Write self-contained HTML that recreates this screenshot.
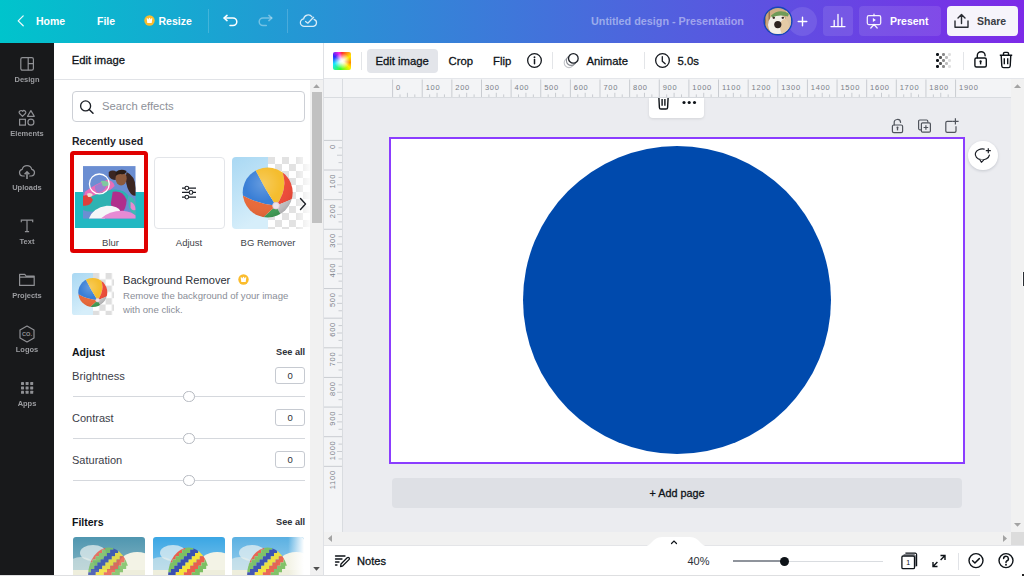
<!DOCTYPE html>
<html><head><meta charset="utf-8">
<style>
*{box-sizing:border-box;margin:0;padding:0}
html,body{width:1024px;height:576px;overflow:hidden;background:#fff;font-family:"Liberation Sans",sans-serif;color:#0d1216}
.a{position:absolute}
#top{left:0;top:0;width:1024px;height:43px;background:linear-gradient(90deg,#00c4cc 0%,#7d2ae8 100%)}
#top .t{position:absolute;color:#fff;font-weight:bold;font-size:10.5px;top:14px;line-height:14px}
#rail{left:0;top:43px;width:54px;height:533px;background:#18191b}
.ri{position:absolute;left:0;width:54px;text-align:center;color:#9c9da1;will-change:transform;font-size:7.5px;line-height:8px;font-weight:bold}
#panel{left:54px;top:43px;width:269px;height:533px;background:#fff}
#tool{left:323px;top:43px;width:701px;height:36px;background:#fff;border-bottom:1px solid #e4e6ea}
#vline{left:323px;top:43px;width:1px;height:534px;background:#dfe1e5;z-index:5}
#canvas{left:343px;top:98px;width:668px;height:434px;background:#ebecf0}
#rh{left:323px;top:79px;width:688px;height:19px;background:#f3f4f6;border-bottom:1px solid #d9dce0}
#rv{left:323px;top:98px;width:20px;height:434px;background:#f3f4f6;border-right:1px solid #d9dce0}
#corner{left:342px;top:79px;width:1px;height:19px;background:#d9dce0}
#vs{left:1011px;top:79px;width:13px;height:453px;background:#f1f1f1}
#hs{left:324px;top:532px;width:687px;height:13px;background:#f1f1f1}
#hsc{left:1011px;top:532px;width:13px;height:13px;background:#dcdcdc}
#bot{left:324px;top:545px;width:700px;height:31px;background:#fff;border-top:1px solid #e4e5e8}
#page{left:389px;top:137px;width:576px;height:327px;border:2px solid #8b3dff;background:#fff}
#circle{left:522.5px;top:146.2px;width:308px;height:308px;border-radius:50%;background:#004aad}
#addpage{left:392px;top:478.3px;width:570px;height:29.7px;background:#dee0e5;border-radius:4px;font-size:10.8px;color:#0e1318;text-align:center;line-height:30px;-webkit-text-stroke:0.3px #0e1318}
.tb{top:54.8px;font-size:11.3px;color:#0e1318;line-height:13px;-webkit-text-stroke:0.3px #0e1318}
</style></head><body>
<div id="top" class="a">
  <svg class="a" style="left:15px;top:14px" width="10" height="14" viewBox="0 0 10 14"><path d="M8.2 1.9 L3.2 6.9 L8.2 11.7" fill="none" stroke="rgba(255,255,255,.92)" stroke-width="1.3" stroke-linecap="round" stroke-linejoin="round"/></svg>
  <span class="t" style="left:36px">Home</span>
  <span class="t" style="left:97px">File</span>
  <svg class="a" style="left:143.6px;top:15.4px" width="11" height="11" viewBox="0 0 11 11"><circle cx="5.5" cy="5.5" r="5.2" fill="#fbbc2c"/><path d="M3.3 7.9 L2.7 3.6 Q2.7 2.8 3.4 3.2 L4.4 4.6 L5 3 Q5.5 2.3 6 3 L6.6 4.6 L7.6 3.2 Q8.3 2.8 8.3 3.6 L7.7 7.9 Z" fill="#fff"/></svg>
  <span class="t" style="left:158.5px">Resize</span>
  <div class="a" style="left:208px;top:9px;width:1px;height:24px;background:rgba(255,255,255,.18)"></div>
  <svg class="a" style="left:222px;top:13px" width="18" height="16" viewBox="0 0 18 16"><path d="M5 2.4 L2 5 L5 7.6" fill="none" stroke="#fff" stroke-width="1.6" stroke-linecap="round" stroke-linejoin="round"/><path d="M2.4 5 H11 A3.8 3.8 0 0 1 11 12.6 H8" fill="none" stroke="#fff" stroke-width="1.5" stroke-linecap="round"/></svg>
  <svg class="a" style="left:256px;top:13px" width="18" height="16" viewBox="0 0 18 16"><path d="M12.9 2.4 L15.9 5 L12.9 7.6" fill="none" stroke="rgba(255,255,255,.38)" stroke-width="1.6" stroke-linecap="round" stroke-linejoin="round"/><path d="M15.5 5 H7 A3.8 3.8 0 0 0 7 12.6 H10.3" fill="none" stroke="rgba(255,255,255,.38)" stroke-width="1.5" stroke-linecap="round"/></svg>
  <div class="a" style="left:287px;top:9px;width:1px;height:24px;background:rgba(255,255,255,.18)"></div>
  <svg class="a" style="left:296px;top:8px" width="26" height="24" viewBox="0 0 26 24"><path d="M16 8.8 A4.7 4.7 0 0 0 7.6 10.9 A3.7 3.7 0 0 0 8.6 18.3 H17.4 A3.6 3.6 0 0 0 18 11.3" fill="none" stroke="rgba(255,255,255,.82)" stroke-width="1.25" stroke-linecap="round"/><path d="M9.6 13.4 L11.8 15.2 L17.6 9.3" fill="none" stroke="rgba(255,255,255,.82)" stroke-width="1.25" stroke-linecap="round" stroke-linejoin="round"/></svg>
  <span class="t" style="left:591px;font-size:10.8px;color:rgba(255,255,255,.45)">Untitled design - Presentation</span>
  <div class="a" style="left:788px;top:6.5px;width:29px;height:29px;border-radius:50%;background:rgba(255,255,255,.1)"></div>
  <svg class="a" style="left:797px;top:16px" width="11" height="11" viewBox="0 0 11 11"><path d="M5.5 1.2 V9.8 M1.2 5.5 H9.8" stroke="#fff" stroke-width="1.4" stroke-linecap="round"/></svg>
  <svg class="a" style="left:763px;top:6px" width="30" height="30" viewBox="0 0 30 30"><defs><clipPath id="av"><circle cx="15" cy="15" r="13.1"/></clipPath></defs>
<circle cx="15" cy="15" r="14.6" fill="#1746b8"/>
<g clip-path="url(#av)"><rect width="30" height="30" fill="#cfae86"/>
<rect x="0" y="0" width="7" height="30" fill="#9a7450"/><rect x="3" y="0" width="2.5" height="30" fill="#c9a67e"/>
<rect x="23" y="0" width="7" height="30" fill="#dcc4a4"/>
<ellipse cx="14.5" cy="19" rx="9.5" ry="11" fill="#f2eee8"/>
<ellipse cx="21.5" cy="21" rx="4.5" ry="8" fill="#e4caa6"/>
<path d="M8 9.5 Q16 2 26 7.5 L25 10.5 Q16 8 9 11.5 Z" fill="#6f9a58"/>
<ellipse cx="10.8" cy="11.8" rx="1.3" ry="1.1" fill="#3a2c28"/><ellipse cx="19.8" cy="11.8" rx="1.3" ry="1.1" fill="#3a2c28"/>
<ellipse cx="14.8" cy="18.6" rx="3.6" ry="3.6" fill="#2c2220"/>
</g></svg>
<div class="a" style="left:823px;top:6px;width:30px;height:30px;border-radius:4px;background:rgba(255,255,255,.1)"></div>
  <svg class="a" style="left:830px;top:13px" width="16" height="15" viewBox="0 0 16 15"><path d="M1 13.6 H15 M4.2 13.6 V7.5 M8 13.6 V1.5 M11.8 13.6 V4.8" stroke="#fff" stroke-width="1.3" stroke-linecap="round"/></svg>
  <div class="a" style="left:859px;top:6px;width:82px;height:30px;border-radius:4px;background:rgba(255,255,255,.1)"></div>
  <svg class="a" style="left:865px;top:13px" width="18" height="17" viewBox="0 0 18 17"><rect x="2.3" y="2.7" width="13.4" height="8.8" rx="1.5" fill="none" stroke="rgba(255,255,255,.92)" stroke-width="1.25"/><path d="M9 1 V2.7 M9 11.5 L5.8 15 M9 11.5 L12.2 15" stroke="rgba(255,255,255,.92)" stroke-width="1.25" stroke-linecap="round"/><path d="M7.9 5.1 L10.9 7.1 L7.9 9.1 Z" fill="#fff"/></svg>
  <span class="t" style="left:890px">Present</span>
  <div class="a" style="left:947px;top:6px;width:71px;height:30px;border-radius:4px;background:#f6f4fb"></div>
  <svg class="a" style="left:953px;top:13px" width="17" height="16" viewBox="0 0 17 16"><path d="M2 8 V14.3 H15 V8" fill="none" stroke="#2a2d33" stroke-width="1.4" stroke-linecap="round" stroke-linejoin="round"/><path d="M8.5 10.5 V1.6 M5 5 L8.5 1.5 L12 5" fill="none" stroke="#2a2d33" stroke-width="1.4" stroke-linecap="round" stroke-linejoin="round"/></svg>
  <span class="t" style="left:977px;color:#3a3d44">Share</span>
</div>
<div id="rail" class="a"></div>
<svg class="a" style="left:19px;top:56px" width="16" height="16" viewBox="0 0 16 16"><rect x="1.8" y="1.7" width="12.6" height="12.5" rx="1.6" fill="none" stroke="#909195" stroke-width="1.2"/><path d="M9.2 1.7 V14.2 M9.2 7.7 H14.4" fill="none" stroke="#909195" stroke-width="1.2"/></svg>
<div class="ri" style="top:75.5px">Design</div>
<svg class="a" style="left:18px;top:109px" width="18" height="18" viewBox="0 0 18 18"><path d="M4.5 7.4 L1.6 4.5 A1.7 1.7 0 0 1 4.5 2.3 A1.7 1.7 0 0 1 7.4 4.5 Z" fill="none" stroke="#909195" stroke-width="1.2" stroke-linejoin="round"/><path d="M12.9 1.6 L16.3 7.3 H9.5 Z" fill="none" stroke="#909195" stroke-width="1.2" stroke-linejoin="round"/><rect x="1.6" y="10.3" width="5.8" height="5.8" fill="none" stroke="#909195" stroke-width="1.2"/><circle cx="12.9" cy="13.2" r="3" fill="none" stroke="#909195" stroke-width="1.2"/></svg>
<div class="ri" style="top:129.5px">Elements</div>
<svg class="a" style="left:18px;top:164px" width="18" height="16" viewBox="0 0 18 16"><path d="M6.3 12 H4.5 A3.4 3.4 0 0 1 4.2 5.3 A5 5 0 0 1 13.8 5.3 A3.4 3.4 0 0 1 13.5 12 H11.7" fill="none" stroke="#909195" stroke-width="1.2" stroke-linecap="round"/><path d="M9 15 V8.2" stroke="#909195" stroke-width="1.6"/><path d="M6.6 10.3 L9 7.8 L11.4 10.3" stroke="#909195" stroke-width="1.6" fill="none"/></svg>
<div class="ri" style="top:183.5px">Uploads</div>
<svg class="a" style="left:20px;top:219px" width="14" height="14" viewBox="0 0 14 14"><path d="M1.3 3.2 V1.1 H12.7 V3.2 M7 1.1 V12.6 M4.9 12.6 H9.1" fill="none" stroke="#909195" stroke-width="1.2"/></svg>
<div class="ri" style="top:237.5px">Text</div>
<svg class="a" style="left:18px;top:273px" width="18" height="14" viewBox="0 0 18 14"><path d="M1.6 12.4 V1.4 H6.8 L8 3 H16.2 V12.4 Z M1.6 4.1 H16.2" fill="none" stroke="#909195" stroke-width="1.2" stroke-linejoin="round"/></svg>
<div class="ri" style="top:291.5px">Projects</div>
<svg class="a" style="left:18px;top:325px" width="18" height="18" viewBox="0 0 18 18"><path d="M9 1 L16 5 V13 L9 17 L2 13 V5 Z" fill="none" stroke="#909195" stroke-width="1.2" stroke-linejoin="round"/><text x="9" y="11.4" font-size="5.6" font-weight="bold" text-anchor="middle" fill="#909195" font-family="Liberation Sans">CO.</text></svg>
<div class="ri" style="top:345.5px">Logos</div>
<svg class="a" style="left:20px;top:381px" width="14" height="14" viewBox="0 0 14 14" fill="#909195"><rect x="1.0" y="1.0" width="3" height="3" rx="0.4"/><rect x="1.0" y="5.4" width="3" height="3" rx="0.4"/><rect x="1.0" y="9.8" width="3" height="3" rx="0.4"/><rect x="5.6" y="1.0" width="3" height="3" rx="0.4"/><rect x="5.6" y="5.4" width="3" height="3" rx="0.4"/><rect x="5.6" y="9.8" width="3" height="3" rx="0.4"/><rect x="10.2" y="1.0" width="3" height="3" rx="0.4"/><rect x="10.2" y="5.4" width="3" height="3" rx="0.4"/><rect x="10.2" y="9.8" width="3" height="3" rx="0.4"/></svg>
<div class="ri" style="top:399.5px">Apps</div>

<div id="panel" class="a"></div>
<div class="a" style="left:71.8px;top:54px;font-size:11.25px;color:#0e1318;line-height:13px;-webkit-text-stroke:0.3px #0e1318">Edit image</div>
<div class="a" style="left:54px;top:79px;width:269px;height:1px;background:#e1e3e7"></div>
<div class="a" style="left:72px;top:91px;width:233px;height:30.5px;border:1px solid #cdd0d6;border-radius:4px"></div>
<svg class="a" style="left:79px;top:99px" width="16" height="16" viewBox="0 0 16 16"><circle cx="6.6" cy="6.9" r="5" fill="none" stroke="#1b1f26" stroke-width="1.35"/><path d="M10.2 10.5 L14 14.2" stroke="#1b1f26" stroke-width="1.5" stroke-linecap="round"/></svg>
<div class="a" style="left:102px;top:99.5px;font-size:11.25px;color:#8d9199;line-height:13px">Search effects</div>
<div class="a" style="left:72px;top:135px;font-size:10.5px;font-weight:bold;color:#1e2228;line-height:13px">Recently used</div>
<div class="a" style="left:70.2px;top:151px;width:78.1px;height:102.3px;border:4.8px solid #e00000;border-radius:3.5px;background:#fff"></div>
<div class="a" style="left:75px;top:191.8px;width:68.5px;height:36.5px;background:#23b8c2"></div>
<svg class="a" style="left:83.3px;top:166.2px" width="52.5" height="52.7" viewBox="0 0 53 53">
 <defs><filter id="bl" x="-10%" y="-10%" width="120%" height="120%"><feGaussianBlur stdDeviation="0.6"/></filter></defs>
 <rect width="53" height="53" fill="#6b8ed2"/>
 <g filter="url(#bl)">
 <path d="M44 6 Q53 10 53 22 L53 30 Q48 30 45 22 Q42 14 44 6 Z" fill="#3a2620"/>
 <path d="M26 6 Q30 3 34 6 L33 14 Q28 14 26 10 Z" fill="#3a2620"/>
 <ellipse cx="38.5" cy="12.5" rx="5.6" ry="7.2" fill="#8c5a3e"/>
 <path d="M33 6 Q38 2 44 5 Q43 9 38 8 Q35 8 33 10 Z" fill="#2a1c18"/>
 <path d="M2 26 Q12 18 24 14 Q30 14 32 20 Q24 28 12 32 Q4 34 0 34 Z" fill="#e96db8"/>
 <path d="M12 20 Q18 16 24 17 Q24 24 16 27 Q12 26 12 20 Z" fill="#9c7fd0"/>
 <path d="M18 15 Q24 14 28 18 Q24 21 20 20 Z" fill="#7fc8a0"/>
 <path d="M0 34 Q14 28 28 24 Q40 22 46 30 Q44 40 36 44 Q20 42 10 46 Q2 46 0 44 Z" fill="#2fb2b2"/>
 <path d="M30 26 Q40 24 44 34 Q44 44 38 48 Q30 46 28 38 Z" fill="#b02f8c"/>
 <path d="M0 30 Q6 28 10 34 Q8 40 2 40 L0 40 Z" fill="#df3f3b"/>
 <path d="M4 28 Q8 26 10 29 Q8 32 5 31 Z" fill="#e8e0d0"/>
 <path d="M46 30 Q53 32 53 40 V50 Q48 48 46 40 Z" fill="#3fb9b3"/>
 <path d="M48 36 Q53 38 53 44 Q50 46 48 42 Z" fill="#e889cf"/>
 <path d="M6 53 Q10 42 24 40 Q36 40 38 46 Q26 47 22 53 Z" fill="#f6f6f8"/>
 <path d="M18 53 Q26 45 40 45 Q50 46 53 50 V53 Z" fill="#e68bd4"/>
 </g>
 <circle cx="16.5" cy="18" r="10" fill="none" stroke="#fff" stroke-width="1.3"/>
</svg>
<div class="a" style="left:153.5px;top:157px;width:71px;height:72px;border:1px solid #e3e5e9;border-radius:4px"></div>
<svg class="a" style="left:181px;top:185px" width="16" height="15" viewBox="0 0 16 15"><path d="M1 3.1 H15 M1 7.4 H15 M1 12.1 H15" stroke="#1b1f26" stroke-width="1.1"/><circle cx="5.8" cy="3.1" r="1.85" fill="#fff" stroke="#1b1f26" stroke-width="1.1"/><circle cx="10" cy="7.4" r="1.85" fill="#fff" stroke="#1b1f26" stroke-width="1.1"/><circle cx="5.8" cy="12.1" r="1.85" fill="#fff" stroke="#1b1f26" stroke-width="1.1"/></svg>
<svg class="a" style="left:232px;top:156.5px" width="80" height="72" viewBox="0 0 80 72">
 <defs>
  <linearGradient id="sky" x1="0" y1="0" x2="0.3" y2="1"><stop offset="0" stop-color="#a9d8f3"/><stop offset="1" stop-color="#d6eefa"/></linearGradient>
  <pattern id="chk" width="14" height="14" patternUnits="userSpaceOnUse" x="36" y="0"><rect width="14" height="14" fill="#fff"/><rect width="7" height="7" fill="#e2e2e2"/><rect x="7" y="7" width="7" height="7" fill="#e2e2e2"/></pattern>
  <linearGradient id="fade" x1="0" x2="1"><stop offset="0.78" stop-color="#fff" stop-opacity="0"/><stop offset="1" stop-color="#fff" stop-opacity="1"/></linearGradient>
  <radialGradient id="shade" cx="0.4" cy="0.32" r="0.72"><stop offset="0" stop-color="#fff" stop-opacity="0.22"/><stop offset="0.5" stop-color="#fff" stop-opacity="0"/><stop offset="0.85" stop-color="#000" stop-opacity="0.04"/><stop offset="1" stop-color="#000" stop-opacity="0.14"/></radialGradient>
  <clipPath id="ballc"><circle cx="35.7" cy="35.5" r="25"/></clipPath>
  <clipPath id="cardc"><rect width="80" height="72" rx="4"/></clipPath>
 </defs>
 <g clip-path="url(#cardc)">
 <rect width="36" height="72" fill="url(#sky)"/>
 <rect x="36" width="44" height="72" fill="url(#chk)"/>
 <g><g clip-path="url(#ballc)"><path d="M44 48.7 Q26 47 11.2 38.8 L-18.2 42.8 L10.4 -10.9 L24.2 14.4 Q33 32 44 48.7 Z" fill="#3a7fd6"/><path d="M44 48.7 Q33 32 24.2 14.4 L10.4 -10.9 L68.9 -7.6 L50.8 15.9 Q56 33 44 48.7 Z" fill="#f5bd2e"/><path d="M44 48.7 Q56 33 50.8 15.9 L68.9 -7.6 L89.6 49.6 L60.2 41.9 Q53 45 44 48.7 Z" fill="#ee4c3a"/><path d="M44 48.7 Q53 45 60.2 41.9 L89.6 49.6 L64.3 84.1 L48.7 57.6 Q46 53 44 48.7 Z" fill="#c4c4c6"/><path d="M44 48.7 Q46 53 48.7 57.6 L64.3 84.1 L27.6 88.7 L32 59.7 Q38 54 44 48.7 Z" fill="#45a25a"/><path d="M44 48.7 Q38 54 32 59.7 L27.6 88.7 L-18.2 42.8 L11.2 38.8 Q26 47 44 48.7 Z" fill="#e96a3a"/><circle cx="35.7" cy="35.5" r="25" fill="url(#shade)"/><circle cx="44" cy="48.7" r="3.4" fill="#ebe3e9" stroke="#e2bcd2" stroke-width="0.7"/></g></g>
 <rect width="80" height="72" fill="url(#fade)"/>
 </g>
 <path d="M68.5 41.5 L73.5 47 L68.5 52.5" fill="none" stroke="#1e2228" stroke-width="1.4" stroke-linecap="round" stroke-linejoin="round"/>
</svg>
<div class="a" style="left:72px;top:237px;width:77px;text-align:center;font-size:9.5px;color:#3e4249;line-height:11px">Blur</div>
<div class="a" style="left:150px;top:237px;width:78px;text-align:center;font-size:9.5px;color:#3e4249;line-height:11px">Adjust</div>
<div class="a" style="left:229px;top:237px;width:78px;text-align:center;font-size:9.5px;color:#3e4249;line-height:11px">BG Remover</div>
<svg class="a" style="left:72px;top:273px" width="42" height="42" viewBox="0 0 80 80">
 <defs><clipPath id="cc2"><rect width="80" height="80" rx="5"/></clipPath>
 <pattern id="chk2" width="24" height="24" patternUnits="userSpaceOnUse" x="40" y="0"><rect width="24" height="24" fill="#fff"/><rect width="12" height="12" fill="#dedede"/><rect x="12" y="12" width="12" height="12" fill="#dedede"/></pattern></defs>
 <g clip-path="url(#cc2)">
 <rect width="40" height="80" fill="url(#sky)"/><rect x="40" width="40" height="80" fill="url(#chk2)"/>
 <g transform="translate(39.6 37.1) scale(1.104) translate(-35.7 -35.5)"><g clip-path="url(#ballc)"><path d="M44 48.7 Q26 47 11.2 38.8 L-18.2 42.8 L10.4 -10.9 L24.2 14.4 Q33 32 44 48.7 Z" fill="#3a7fd6"/><path d="M44 48.7 Q33 32 24.2 14.4 L10.4 -10.9 L68.9 -7.6 L50.8 15.9 Q56 33 44 48.7 Z" fill="#f5bd2e"/><path d="M44 48.7 Q56 33 50.8 15.9 L68.9 -7.6 L89.6 49.6 L60.2 41.9 Q53 45 44 48.7 Z" fill="#ee4c3a"/><path d="M44 48.7 Q53 45 60.2 41.9 L89.6 49.6 L64.3 84.1 L48.7 57.6 Q46 53 44 48.7 Z" fill="#c4c4c6"/><path d="M44 48.7 Q46 53 48.7 57.6 L64.3 84.1 L27.6 88.7 L32 59.7 Q38 54 44 48.7 Z" fill="#45a25a"/><path d="M44 48.7 Q38 54 32 59.7 L27.6 88.7 L-18.2 42.8 L11.2 38.8 Q26 47 44 48.7 Z" fill="#e96a3a"/><circle cx="35.7" cy="35.5" r="25" fill="url(#shade)"/><circle cx="44" cy="48.7" r="3.4" fill="#ebe3e9" stroke="#e2bcd2" stroke-width="0.7"/></g></g></g>
</svg>
<div class="a" style="left:123px;top:273.5px;font-size:11.1px;color:#2c3038;line-height:13px">Background Remover</div>
<svg class="a" style="left:237.6px;top:274.2px" width="11" height="11" viewBox="0 0 11 11"><circle cx="5.5" cy="5.5" r="5.2" fill="#fbbc2c"/><path d="M3.3 7.9 L2.7 3.6 Q2.7 2.8 3.4 3.2 L4.4 4.6 L5 3 Q5.5 2.3 6 3 L6.6 4.6 L7.6 3.2 Q8.3 2.8 8.3 3.6 L7.7 7.9 Z" fill="#fff"/></svg>
<div class="a" style="left:123px;top:289px;font-size:9.6px;color:#8a8e97;line-height:14px;width:180px">Remove the background of your image<br>with one click.</div>
<div class="a" style="left:72px;top:345.8px;font-size:10.5px;font-weight:bold;color:#0e1318;line-height:13px">Adjust</div>
<div class="a" style="left:276px;top:346.5px;font-size:9.2px;font-weight:bold;color:#2c3038;line-height:11px">See all</div>
<div class="a" style="left:72px;top:369.5px;font-size:11.2px;color:#3c4049;line-height:13px">Brightness</div>
<div class="a" style="left:275.4px;top:367.2px;width:29.6px;height:17.2px;border:1px solid #c6cad1;border-radius:3px;font-size:9.5px;color:#2c3038;text-align:center;line-height:15px">0</div>
<div class="a" style="left:72.5px;top:396.0px;width:232.5px;height:1.2px;background:#d5d8dd"></div>
<div class="a" style="left:183.2px;top:390.9px;width:11.6px;height:11.6px;border-radius:50%;background:#fff;border:1.1px solid #b5b9c0"></div>
<div class="a" style="left:72px;top:411.5px;font-size:11px;color:#3c4049;line-height:13px">Contrast</div>
<div class="a" style="left:275.4px;top:409.2px;width:29.6px;height:17.2px;border:1px solid #c6cad1;border-radius:3px;font-size:9.5px;color:#2c3038;text-align:center;line-height:15px">0</div>
<div class="a" style="left:72.5px;top:438.0px;width:232.5px;height:1.2px;background:#d5d8dd"></div>
<div class="a" style="left:183.2px;top:432.9px;width:11.6px;height:11.6px;border-radius:50%;background:#fff;border:1.1px solid #b5b9c0"></div>
<div class="a" style="left:72px;top:453.5px;font-size:11px;color:#3c4049;line-height:13px">Saturation</div>
<div class="a" style="left:275.4px;top:451.2px;width:29.6px;height:17.2px;border:1px solid #c6cad1;border-radius:3px;font-size:9.5px;color:#2c3038;text-align:center;line-height:15px">0</div>
<div class="a" style="left:72.5px;top:480.0px;width:232.5px;height:1.2px;background:#d5d8dd"></div>
<div class="a" style="left:183.2px;top:474.9px;width:11.6px;height:11.6px;border-radius:50%;background:#fff;border:1.1px solid #b5b9c0"></div>
<div class="a" style="left:72px;top:515.6px;font-size:10.5px;font-weight:bold;color:#0e1318;line-height:13px">Filters</div>
<div class="a" style="left:276px;top:516.5px;font-size:9.2px;font-weight:bold;color:#2c3038;line-height:11px">See all</div>

<div class="a" style="left:310px;top:80px;width:13px;height:496px;background:#f1f1f1"></div>
<div class="a" style="left:312px;top:92px;width:9.5px;height:131px;background:#c1c1c1"></div>
<svg class="a" style="left:312px;top:83px" width="9" height="6" viewBox="0 0 9 6"><path d="M1.2 5 L4.5 1.3 L7.8 5 Z" fill="#a3a3a3"/></svg>
<svg class="a" style="left:312px;top:566px" width="9" height="6" viewBox="0 0 9 6"><path d="M1.2 1 L4.5 4.7 L7.8 1 Z" fill="#505050"/></svg>
<svg class="a" style="left:73.4px;top:537px" width="72" height="38" viewBox="0 0 72 38"><defs><linearGradient id="sk0" x1="0" y1="0" x2="0" y2="1"><stop offset="0" stop-color="#4f96b0"/><stop offset="1" stop-color="#8ab8c4"/></linearGradient><clipPath id="fc0"><rect width="72" height="44" rx="3"/></clipPath><clipPath id="bl0"><ellipse cx="35.6" cy="38.5" rx="20.5" ry="28"/></clipPath></defs>
<g clip-path="url(#fc0)"><rect width="72" height="38" fill="url(#sk0)"/>
<ellipse cx="20" cy="16" rx="13" ry="8" fill="#eef3f2" opacity="0.7"/><ellipse cx="8" cy="30" rx="14" ry="10" fill="#e9efe9" opacity="0.6"/><ellipse cx="64" cy="28" rx="18" ry="13" fill="#f3f3e6"/><rect y="33" width="72" height="5" fill="#eeeedc"/>
<g clip-path="url(#bl0)" opacity="0.85"><path d="M-78.0 48.0 L-74.8 48.0 L-74.8 44.8 L-71.6 44.8 L-71.6 41.6 L-68.4 41.6 L-68.4 38.4 L-65.2 38.4 L-65.2 35.2 L-62.0 35.2 L-62.0 32.0 L-58.8 32.0 L-58.8 28.8 L-55.6 28.8 L-55.6 25.6 L-52.4 25.6 L-52.4 22.4 L-49.2 22.4 L-49.2 19.2 L-46.0 19.2 L-46.0 16.0 L-42.8 16.0 L-42.8 12.8 L-39.6 12.8 L-39.6 9.6 L-36.4 9.6 L-36.4 6.4 L-33.2 6.4 L-33.2 3.2 L-30.0 3.2 L-30.0 -0.0 L-26.8 -0.0 L-26.8 -3.2 L-23.6 -3.2 L-23.6 -6.4 L-20.4 -6.4 L-20.4 -9.6 L-12.4 -9.6 L-12.4 -6.4 L-15.6 -6.4 L-15.6 -3.2 L-18.8 -3.2 L-18.8 -0.0 L-22.0 -0.0 L-22.0 3.2 L-25.2 3.2 L-25.2 6.4 L-28.4 6.4 L-28.4 9.6 L-31.6 9.6 L-31.6 12.8 L-34.8 12.8 L-34.8 16.0 L-38.0 16.0 L-38.0 19.2 L-41.2 19.2 L-41.2 22.4 L-44.4 22.4 L-44.4 25.6 L-47.6 25.6 L-47.6 28.8 L-50.8 28.8 L-50.8 32.0 L-54.0 32.0 L-54.0 35.2 L-57.2 35.2 L-57.2 38.4 L-60.4 38.4 L-60.4 41.6 L-63.6 41.6 L-63.6 44.8 L-66.8 44.8 L-66.8 48.0 L-70.0 48.0 Z" fill="#e9604c"/><path d="M-70.0 48.0 L-66.8 48.0 L-66.8 44.8 L-63.6 44.8 L-63.6 41.6 L-60.4 41.6 L-60.4 38.4 L-57.2 38.4 L-57.2 35.2 L-54.0 35.2 L-54.0 32.0 L-50.8 32.0 L-50.8 28.8 L-47.6 28.8 L-47.6 25.6 L-44.4 25.6 L-44.4 22.4 L-41.2 22.4 L-41.2 19.2 L-38.0 19.2 L-38.0 16.0 L-34.8 16.0 L-34.8 12.8 L-31.6 12.8 L-31.6 9.6 L-28.4 9.6 L-28.4 6.4 L-25.2 6.4 L-25.2 3.2 L-22.0 3.2 L-22.0 -0.0 L-18.8 -0.0 L-18.8 -3.2 L-15.6 -3.2 L-15.6 -6.4 L-12.4 -6.4 L-12.4 -9.6 L-4.4 -9.6 L-4.4 -6.4 L-7.6 -6.4 L-7.6 -3.2 L-10.8 -3.2 L-10.8 -0.0 L-14.0 -0.0 L-14.0 3.2 L-17.2 3.2 L-17.2 6.4 L-20.4 6.4 L-20.4 9.6 L-23.6 9.6 L-23.6 12.8 L-26.8 12.8 L-26.8 16.0 L-30.0 16.0 L-30.0 19.2 L-33.2 19.2 L-33.2 22.4 L-36.4 22.4 L-36.4 25.6 L-39.6 25.6 L-39.6 28.8 L-42.8 28.8 L-42.8 32.0 L-46.0 32.0 L-46.0 35.2 L-49.2 35.2 L-49.2 38.4 L-52.4 38.4 L-52.4 41.6 L-55.6 41.6 L-55.6 44.8 L-58.8 44.8 L-58.8 48.0 L-62.0 48.0 Z" fill="#7cc063"/><path d="M-62.0 48.0 L-58.8 48.0 L-58.8 44.8 L-55.6 44.8 L-55.6 41.6 L-52.4 41.6 L-52.4 38.4 L-49.2 38.4 L-49.2 35.2 L-46.0 35.2 L-46.0 32.0 L-42.8 32.0 L-42.8 28.8 L-39.6 28.8 L-39.6 25.6 L-36.4 25.6 L-36.4 22.4 L-33.2 22.4 L-33.2 19.2 L-30.0 19.2 L-30.0 16.0 L-26.8 16.0 L-26.8 12.8 L-23.6 12.8 L-23.6 9.6 L-20.4 9.6 L-20.4 6.4 L-17.2 6.4 L-17.2 3.2 L-14.0 3.2 L-14.0 -0.0 L-10.8 -0.0 L-10.8 -3.2 L-7.6 -3.2 L-7.6 -6.4 L-4.4 -6.4 L-4.4 -9.6 L3.6 -9.6 L3.6 -6.4 L0.4 -6.4 L0.4 -3.2 L-2.8 -3.2 L-2.8 -0.0 L-6.0 -0.0 L-6.0 3.2 L-9.2 3.2 L-9.2 6.4 L-12.4 6.4 L-12.4 9.6 L-15.6 9.6 L-15.6 12.8 L-18.8 12.8 L-18.8 16.0 L-22.0 16.0 L-22.0 19.2 L-25.2 19.2 L-25.2 22.4 L-28.4 22.4 L-28.4 25.6 L-31.6 25.6 L-31.6 28.8 L-34.8 28.8 L-34.8 32.0 L-38.0 32.0 L-38.0 35.2 L-41.2 35.2 L-41.2 38.4 L-44.4 38.4 L-44.4 41.6 L-47.6 41.6 L-47.6 44.8 L-50.8 44.8 L-50.8 48.0 L-54.0 48.0 Z" fill="#3a4fb0"/><path d="M-54.0 48.0 L-50.8 48.0 L-50.8 44.8 L-47.6 44.8 L-47.6 41.6 L-44.4 41.6 L-44.4 38.4 L-41.2 38.4 L-41.2 35.2 L-38.0 35.2 L-38.0 32.0 L-34.8 32.0 L-34.8 28.8 L-31.6 28.8 L-31.6 25.6 L-28.4 25.6 L-28.4 22.4 L-25.2 22.4 L-25.2 19.2 L-22.0 19.2 L-22.0 16.0 L-18.8 16.0 L-18.8 12.8 L-15.6 12.8 L-15.6 9.6 L-12.4 9.6 L-12.4 6.4 L-9.2 6.4 L-9.2 3.2 L-6.0 3.2 L-6.0 -0.0 L-2.8 -0.0 L-2.8 -3.2 L0.4 -3.2 L0.4 -6.4 L3.6 -6.4 L3.6 -9.6 L11.6 -9.6 L11.6 -6.4 L8.4 -6.4 L8.4 -3.2 L5.2 -3.2 L5.2 -0.0 L2.0 -0.0 L2.0 3.2 L-1.2 3.2 L-1.2 6.4 L-4.4 6.4 L-4.4 9.6 L-7.6 9.6 L-7.6 12.8 L-10.8 12.8 L-10.8 16.0 L-14.0 16.0 L-14.0 19.2 L-17.2 19.2 L-17.2 22.4 L-20.4 22.4 L-20.4 25.6 L-23.6 25.6 L-23.6 28.8 L-26.8 28.8 L-26.8 32.0 L-30.0 32.0 L-30.0 35.2 L-33.2 35.2 L-33.2 38.4 L-36.4 38.4 L-36.4 41.6 L-39.6 41.6 L-39.6 44.8 L-42.8 44.8 L-42.8 48.0 L-46.0 48.0 Z" fill="#f4e23c"/><path d="M-46.0 48.0 L-42.8 48.0 L-42.8 44.8 L-39.6 44.8 L-39.6 41.6 L-36.4 41.6 L-36.4 38.4 L-33.2 38.4 L-33.2 35.2 L-30.0 35.2 L-30.0 32.0 L-26.8 32.0 L-26.8 28.8 L-23.6 28.8 L-23.6 25.6 L-20.4 25.6 L-20.4 22.4 L-17.2 22.4 L-17.2 19.2 L-14.0 19.2 L-14.0 16.0 L-10.8 16.0 L-10.8 12.8 L-7.6 12.8 L-7.6 9.6 L-4.4 9.6 L-4.4 6.4 L-1.2 6.4 L-1.2 3.2 L2.0 3.2 L2.0 -0.0 L5.2 -0.0 L5.2 -3.2 L8.4 -3.2 L8.4 -6.4 L11.6 -6.4 L11.6 -9.6 L19.6 -9.6 L19.6 -6.4 L16.4 -6.4 L16.4 -3.2 L13.2 -3.2 L13.2 -0.0 L10.0 -0.0 L10.0 3.2 L6.8 3.2 L6.8 6.4 L3.6 6.4 L3.6 9.6 L0.4 9.6 L0.4 12.8 L-2.8 12.8 L-2.8 16.0 L-6.0 16.0 L-6.0 19.2 L-9.2 19.2 L-9.2 22.4 L-12.4 22.4 L-12.4 25.6 L-15.6 25.6 L-15.6 28.8 L-18.8 28.8 L-18.8 32.0 L-22.0 32.0 L-22.0 35.2 L-25.2 35.2 L-25.2 38.4 L-28.4 38.4 L-28.4 41.6 L-31.6 41.6 L-31.6 44.8 L-34.8 44.8 L-34.8 48.0 L-38.0 48.0 Z" fill="#e9604c"/><path d="M-38.0 48.0 L-34.8 48.0 L-34.8 44.8 L-31.6 44.8 L-31.6 41.6 L-28.4 41.6 L-28.4 38.4 L-25.2 38.4 L-25.2 35.2 L-22.0 35.2 L-22.0 32.0 L-18.8 32.0 L-18.8 28.8 L-15.6 28.8 L-15.6 25.6 L-12.4 25.6 L-12.4 22.4 L-9.2 22.4 L-9.2 19.2 L-6.0 19.2 L-6.0 16.0 L-2.8 16.0 L-2.8 12.8 L0.4 12.8 L0.4 9.6 L3.6 9.6 L3.6 6.4 L6.8 6.4 L6.8 3.2 L10.0 3.2 L10.0 -0.0 L13.2 -0.0 L13.2 -3.2 L16.4 -3.2 L16.4 -6.4 L19.6 -6.4 L19.6 -9.6 L27.6 -9.6 L27.6 -6.4 L24.4 -6.4 L24.4 -3.2 L21.2 -3.2 L21.2 -0.0 L18.0 -0.0 L18.0 3.2 L14.8 3.2 L14.8 6.4 L11.6 6.4 L11.6 9.6 L8.4 9.6 L8.4 12.8 L5.2 12.8 L5.2 16.0 L2.0 16.0 L2.0 19.2 L-1.2 19.2 L-1.2 22.4 L-4.4 22.4 L-4.4 25.6 L-7.6 25.6 L-7.6 28.8 L-10.8 28.8 L-10.8 32.0 L-14.0 32.0 L-14.0 35.2 L-17.2 35.2 L-17.2 38.4 L-20.4 38.4 L-20.4 41.6 L-23.6 41.6 L-23.6 44.8 L-26.8 44.8 L-26.8 48.0 L-30.0 48.0 Z" fill="#7cc063"/><path d="M-30.0 48.0 L-26.8 48.0 L-26.8 44.8 L-23.6 44.8 L-23.6 41.6 L-20.4 41.6 L-20.4 38.4 L-17.2 38.4 L-17.2 35.2 L-14.0 35.2 L-14.0 32.0 L-10.8 32.0 L-10.8 28.8 L-7.6 28.8 L-7.6 25.6 L-4.4 25.6 L-4.4 22.4 L-1.2 22.4 L-1.2 19.2 L2.0 19.2 L2.0 16.0 L5.2 16.0 L5.2 12.8 L8.4 12.8 L8.4 9.6 L11.6 9.6 L11.6 6.4 L14.8 6.4 L14.8 3.2 L18.0 3.2 L18.0 -0.0 L21.2 -0.0 L21.2 -3.2 L24.4 -3.2 L24.4 -6.4 L27.6 -6.4 L27.6 -9.6 L35.6 -9.6 L35.6 -6.4 L32.4 -6.4 L32.4 -3.2 L29.2 -3.2 L29.2 -0.0 L26.0 -0.0 L26.0 3.2 L22.8 3.2 L22.8 6.4 L19.6 6.4 L19.6 9.6 L16.4 9.6 L16.4 12.8 L13.2 12.8 L13.2 16.0 L10.0 16.0 L10.0 19.2 L6.8 19.2 L6.8 22.4 L3.6 22.4 L3.6 25.6 L0.4 25.6 L0.4 28.8 L-2.8 28.8 L-2.8 32.0 L-6.0 32.0 L-6.0 35.2 L-9.2 35.2 L-9.2 38.4 L-12.4 38.4 L-12.4 41.6 L-15.6 41.6 L-15.6 44.8 L-18.8 44.8 L-18.8 48.0 L-22.0 48.0 Z" fill="#3a4fb0"/><path d="M-22.0 48.0 L-18.8 48.0 L-18.8 44.8 L-15.6 44.8 L-15.6 41.6 L-12.4 41.6 L-12.4 38.4 L-9.2 38.4 L-9.2 35.2 L-6.0 35.2 L-6.0 32.0 L-2.8 32.0 L-2.8 28.8 L0.4 28.8 L0.4 25.6 L3.6 25.6 L3.6 22.4 L6.8 22.4 L6.8 19.2 L10.0 19.2 L10.0 16.0 L13.2 16.0 L13.2 12.8 L16.4 12.8 L16.4 9.6 L19.6 9.6 L19.6 6.4 L22.8 6.4 L22.8 3.2 L26.0 3.2 L26.0 -0.0 L29.2 -0.0 L29.2 -3.2 L32.4 -3.2 L32.4 -6.4 L35.6 -6.4 L35.6 -9.6 L43.6 -9.6 L43.6 -6.4 L40.4 -6.4 L40.4 -3.2 L37.2 -3.2 L37.2 -0.0 L34.0 -0.0 L34.0 3.2 L30.8 3.2 L30.8 6.4 L27.6 6.4 L27.6 9.6 L24.4 9.6 L24.4 12.8 L21.2 12.8 L21.2 16.0 L18.0 16.0 L18.0 19.2 L14.8 19.2 L14.8 22.4 L11.6 22.4 L11.6 25.6 L8.4 25.6 L8.4 28.8 L5.2 28.8 L5.2 32.0 L2.0 32.0 L2.0 35.2 L-1.2 35.2 L-1.2 38.4 L-4.4 38.4 L-4.4 41.6 L-7.6 41.6 L-7.6 44.8 L-10.8 44.8 L-10.8 48.0 L-14.0 48.0 Z" fill="#f4e23c"/><path d="M-14.0 48.0 L-10.8 48.0 L-10.8 44.8 L-7.6 44.8 L-7.6 41.6 L-4.4 41.6 L-4.4 38.4 L-1.2 38.4 L-1.2 35.2 L2.0 35.2 L2.0 32.0 L5.2 32.0 L5.2 28.8 L8.4 28.8 L8.4 25.6 L11.6 25.6 L11.6 22.4 L14.8 22.4 L14.8 19.2 L18.0 19.2 L18.0 16.0 L21.2 16.0 L21.2 12.8 L24.4 12.8 L24.4 9.6 L27.6 9.6 L27.6 6.4 L30.8 6.4 L30.8 3.2 L34.0 3.2 L34.0 -0.0 L37.2 -0.0 L37.2 -3.2 L40.4 -3.2 L40.4 -6.4 L43.6 -6.4 L43.6 -9.6 L51.6 -9.6 L51.6 -6.4 L48.4 -6.4 L48.4 -3.2 L45.2 -3.2 L45.2 -0.0 L42.0 -0.0 L42.0 3.2 L38.8 3.2 L38.8 6.4 L35.6 6.4 L35.6 9.6 L32.4 9.6 L32.4 12.8 L29.2 12.8 L29.2 16.0 L26.0 16.0 L26.0 19.2 L22.8 19.2 L22.8 22.4 L19.6 22.4 L19.6 25.6 L16.4 25.6 L16.4 28.8 L13.2 28.8 L13.2 32.0 L10.0 32.0 L10.0 35.2 L6.8 35.2 L6.8 38.4 L3.6 38.4 L3.6 41.6 L0.4 41.6 L0.4 44.8 L-2.8 44.8 L-2.8 48.0 L-6.0 48.0 Z" fill="#e9604c"/><path d="M-6.0 48.0 L-2.8 48.0 L-2.8 44.8 L0.4 44.8 L0.4 41.6 L3.6 41.6 L3.6 38.4 L6.8 38.4 L6.8 35.2 L10.0 35.2 L10.0 32.0 L13.2 32.0 L13.2 28.8 L16.4 28.8 L16.4 25.6 L19.6 25.6 L19.6 22.4 L22.8 22.4 L22.8 19.2 L26.0 19.2 L26.0 16.0 L29.2 16.0 L29.2 12.8 L32.4 12.8 L32.4 9.6 L35.6 9.6 L35.6 6.4 L38.8 6.4 L38.8 3.2 L42.0 3.2 L42.0 -0.0 L45.2 -0.0 L45.2 -3.2 L48.4 -3.2 L48.4 -6.4 L51.6 -6.4 L51.6 -9.6 L59.6 -9.6 L59.6 -6.4 L56.4 -6.4 L56.4 -3.2 L53.2 -3.2 L53.2 -0.0 L50.0 -0.0 L50.0 3.2 L46.8 3.2 L46.8 6.4 L43.6 6.4 L43.6 9.6 L40.4 9.6 L40.4 12.8 L37.2 12.8 L37.2 16.0 L34.0 16.0 L34.0 19.2 L30.8 19.2 L30.8 22.4 L27.6 22.4 L27.6 25.6 L24.4 25.6 L24.4 28.8 L21.2 28.8 L21.2 32.0 L18.0 32.0 L18.0 35.2 L14.8 35.2 L14.8 38.4 L11.6 38.4 L11.6 41.6 L8.4 41.6 L8.4 44.8 L5.2 44.8 L5.2 48.0 L2.0 48.0 Z" fill="#7cc063"/><path d="M2.0 48.0 L5.2 48.0 L5.2 44.8 L8.4 44.8 L8.4 41.6 L11.6 41.6 L11.6 38.4 L14.8 38.4 L14.8 35.2 L18.0 35.2 L18.0 32.0 L21.2 32.0 L21.2 28.8 L24.4 28.8 L24.4 25.6 L27.6 25.6 L27.6 22.4 L30.8 22.4 L30.8 19.2 L34.0 19.2 L34.0 16.0 L37.2 16.0 L37.2 12.8 L40.4 12.8 L40.4 9.6 L43.6 9.6 L43.6 6.4 L46.8 6.4 L46.8 3.2 L50.0 3.2 L50.0 -0.0 L53.2 -0.0 L53.2 -3.2 L56.4 -3.2 L56.4 -6.4 L59.6 -6.4 L59.6 -9.6 L67.6 -9.6 L67.6 -6.4 L64.4 -6.4 L64.4 -3.2 L61.2 -3.2 L61.2 -0.0 L58.0 -0.0 L58.0 3.2 L54.8 3.2 L54.8 6.4 L51.6 6.4 L51.6 9.6 L48.4 9.6 L48.4 12.8 L45.2 12.8 L45.2 16.0 L42.0 16.0 L42.0 19.2 L38.8 19.2 L38.8 22.4 L35.6 22.4 L35.6 25.6 L32.4 25.6 L32.4 28.8 L29.2 28.8 L29.2 32.0 L26.0 32.0 L26.0 35.2 L22.8 35.2 L22.8 38.4 L19.6 38.4 L19.6 41.6 L16.4 41.6 L16.4 44.8 L13.2 44.8 L13.2 48.0 L10.0 48.0 Z" fill="#3a4fb0"/><path d="M10.0 48.0 L13.2 48.0 L13.2 44.8 L16.4 44.8 L16.4 41.6 L19.6 41.6 L19.6 38.4 L22.8 38.4 L22.8 35.2 L26.0 35.2 L26.0 32.0 L29.2 32.0 L29.2 28.8 L32.4 28.8 L32.4 25.6 L35.6 25.6 L35.6 22.4 L38.8 22.4 L38.8 19.2 L42.0 19.2 L42.0 16.0 L45.2 16.0 L45.2 12.8 L48.4 12.8 L48.4 9.6 L51.6 9.6 L51.6 6.4 L54.8 6.4 L54.8 3.2 L58.0 3.2 L58.0 -0.0 L61.2 -0.0 L61.2 -3.2 L64.4 -3.2 L64.4 -6.4 L67.6 -6.4 L67.6 -9.6 L75.6 -9.6 L75.6 -6.4 L72.4 -6.4 L72.4 -3.2 L69.2 -3.2 L69.2 -0.0 L66.0 -0.0 L66.0 3.2 L62.8 3.2 L62.8 6.4 L59.6 6.4 L59.6 9.6 L56.4 9.6 L56.4 12.8 L53.2 12.8 L53.2 16.0 L50.0 16.0 L50.0 19.2 L46.8 19.2 L46.8 22.4 L43.6 22.4 L43.6 25.6 L40.4 25.6 L40.4 28.8 L37.2 28.8 L37.2 32.0 L34.0 32.0 L34.0 35.2 L30.8 35.2 L30.8 38.4 L27.6 38.4 L27.6 41.6 L24.4 41.6 L24.4 44.8 L21.2 44.8 L21.2 48.0 L18.0 48.0 Z" fill="#f4e23c"/><path d="M18.0 48.0 L21.2 48.0 L21.2 44.8 L24.4 44.8 L24.4 41.6 L27.6 41.6 L27.6 38.4 L30.8 38.4 L30.8 35.2 L34.0 35.2 L34.0 32.0 L37.2 32.0 L37.2 28.8 L40.4 28.8 L40.4 25.6 L43.6 25.6 L43.6 22.4 L46.8 22.4 L46.8 19.2 L50.0 19.2 L50.0 16.0 L53.2 16.0 L53.2 12.8 L56.4 12.8 L56.4 9.6 L59.6 9.6 L59.6 6.4 L62.8 6.4 L62.8 3.2 L66.0 3.2 L66.0 -0.0 L69.2 -0.0 L69.2 -3.2 L72.4 -3.2 L72.4 -6.4 L75.6 -6.4 L75.6 -9.6 L83.6 -9.6 L83.6 -6.4 L80.4 -6.4 L80.4 -3.2 L77.2 -3.2 L77.2 -0.0 L74.0 -0.0 L74.0 3.2 L70.8 3.2 L70.8 6.4 L67.6 6.4 L67.6 9.6 L64.4 9.6 L64.4 12.8 L61.2 12.8 L61.2 16.0 L58.0 16.0 L58.0 19.2 L54.8 19.2 L54.8 22.4 L51.6 22.4 L51.6 25.6 L48.4 25.6 L48.4 28.8 L45.2 28.8 L45.2 32.0 L42.0 32.0 L42.0 35.2 L38.8 35.2 L38.8 38.4 L35.6 38.4 L35.6 41.6 L32.4 41.6 L32.4 44.8 L29.2 44.8 L29.2 48.0 L26.0 48.0 Z" fill="#e9604c"/><path d="M26.0 48.0 L29.2 48.0 L29.2 44.8 L32.4 44.8 L32.4 41.6 L35.6 41.6 L35.6 38.4 L38.8 38.4 L38.8 35.2 L42.0 35.2 L42.0 32.0 L45.2 32.0 L45.2 28.8 L48.4 28.8 L48.4 25.6 L51.6 25.6 L51.6 22.4 L54.8 22.4 L54.8 19.2 L58.0 19.2 L58.0 16.0 L61.2 16.0 L61.2 12.8 L64.4 12.8 L64.4 9.6 L67.6 9.6 L67.6 6.4 L70.8 6.4 L70.8 3.2 L74.0 3.2 L74.0 -0.0 L77.2 -0.0 L77.2 -3.2 L80.4 -3.2 L80.4 -6.4 L83.6 -6.4 L83.6 -9.6 L91.6 -9.6 L91.6 -6.4 L88.4 -6.4 L88.4 -3.2 L85.2 -3.2 L85.2 -0.0 L82.0 -0.0 L82.0 3.2 L78.8 3.2 L78.8 6.4 L75.6 6.4 L75.6 9.6 L72.4 9.6 L72.4 12.8 L69.2 12.8 L69.2 16.0 L66.0 16.0 L66.0 19.2 L62.8 19.2 L62.8 22.4 L59.6 22.4 L59.6 25.6 L56.4 25.6 L56.4 28.8 L53.2 28.8 L53.2 32.0 L50.0 32.0 L50.0 35.2 L46.8 35.2 L46.8 38.4 L43.6 38.4 L43.6 41.6 L40.4 41.6 L40.4 44.8 L37.2 44.8 L37.2 48.0 L34.0 48.0 Z" fill="#7cc063"/></g>
</g></svg>
<svg class="a" style="left:152.9px;top:537px" width="72" height="38" viewBox="0 0 72 38"><defs><linearGradient id="sk1" x1="0" y1="0" x2="0" y2="1"><stop offset="0" stop-color="#3aa6e4"/><stop offset="1" stop-color="#86c8ec"/></linearGradient><clipPath id="fc1"><rect width="72" height="44" rx="3"/></clipPath><clipPath id="bl1"><ellipse cx="35.6" cy="38.5" rx="20.5" ry="28"/></clipPath></defs>
<g clip-path="url(#fc1)"><rect width="72" height="38" fill="url(#sk1)"/>
<ellipse cx="20" cy="16" rx="13" ry="8" fill="#eef3f2" opacity="0.7"/><ellipse cx="8" cy="30" rx="14" ry="10" fill="#e9efe9" opacity="0.6"/><ellipse cx="64" cy="28" rx="18" ry="13" fill="#f3f3e6"/><rect y="33" width="72" height="5" fill="#eeeedc"/>
<g clip-path="url(#bl1)" opacity="1"><path d="M-78.0 48.0 L-74.8 48.0 L-74.8 44.8 L-71.6 44.8 L-71.6 41.6 L-68.4 41.6 L-68.4 38.4 L-65.2 38.4 L-65.2 35.2 L-62.0 35.2 L-62.0 32.0 L-58.8 32.0 L-58.8 28.8 L-55.6 28.8 L-55.6 25.6 L-52.4 25.6 L-52.4 22.4 L-49.2 22.4 L-49.2 19.2 L-46.0 19.2 L-46.0 16.0 L-42.8 16.0 L-42.8 12.8 L-39.6 12.8 L-39.6 9.6 L-36.4 9.6 L-36.4 6.4 L-33.2 6.4 L-33.2 3.2 L-30.0 3.2 L-30.0 -0.0 L-26.8 -0.0 L-26.8 -3.2 L-23.6 -3.2 L-23.6 -6.4 L-20.4 -6.4 L-20.4 -9.6 L-12.4 -9.6 L-12.4 -6.4 L-15.6 -6.4 L-15.6 -3.2 L-18.8 -3.2 L-18.8 -0.0 L-22.0 -0.0 L-22.0 3.2 L-25.2 3.2 L-25.2 6.4 L-28.4 6.4 L-28.4 9.6 L-31.6 9.6 L-31.6 12.8 L-34.8 12.8 L-34.8 16.0 L-38.0 16.0 L-38.0 19.2 L-41.2 19.2 L-41.2 22.4 L-44.4 22.4 L-44.4 25.6 L-47.6 25.6 L-47.6 28.8 L-50.8 28.8 L-50.8 32.0 L-54.0 32.0 L-54.0 35.2 L-57.2 35.2 L-57.2 38.4 L-60.4 38.4 L-60.4 41.6 L-63.6 41.6 L-63.6 44.8 L-66.8 44.8 L-66.8 48.0 L-70.0 48.0 Z" fill="#e9604c"/><path d="M-70.0 48.0 L-66.8 48.0 L-66.8 44.8 L-63.6 44.8 L-63.6 41.6 L-60.4 41.6 L-60.4 38.4 L-57.2 38.4 L-57.2 35.2 L-54.0 35.2 L-54.0 32.0 L-50.8 32.0 L-50.8 28.8 L-47.6 28.8 L-47.6 25.6 L-44.4 25.6 L-44.4 22.4 L-41.2 22.4 L-41.2 19.2 L-38.0 19.2 L-38.0 16.0 L-34.8 16.0 L-34.8 12.8 L-31.6 12.8 L-31.6 9.6 L-28.4 9.6 L-28.4 6.4 L-25.2 6.4 L-25.2 3.2 L-22.0 3.2 L-22.0 -0.0 L-18.8 -0.0 L-18.8 -3.2 L-15.6 -3.2 L-15.6 -6.4 L-12.4 -6.4 L-12.4 -9.6 L-4.4 -9.6 L-4.4 -6.4 L-7.6 -6.4 L-7.6 -3.2 L-10.8 -3.2 L-10.8 -0.0 L-14.0 -0.0 L-14.0 3.2 L-17.2 3.2 L-17.2 6.4 L-20.4 6.4 L-20.4 9.6 L-23.6 9.6 L-23.6 12.8 L-26.8 12.8 L-26.8 16.0 L-30.0 16.0 L-30.0 19.2 L-33.2 19.2 L-33.2 22.4 L-36.4 22.4 L-36.4 25.6 L-39.6 25.6 L-39.6 28.8 L-42.8 28.8 L-42.8 32.0 L-46.0 32.0 L-46.0 35.2 L-49.2 35.2 L-49.2 38.4 L-52.4 38.4 L-52.4 41.6 L-55.6 41.6 L-55.6 44.8 L-58.8 44.8 L-58.8 48.0 L-62.0 48.0 Z" fill="#7cc063"/><path d="M-62.0 48.0 L-58.8 48.0 L-58.8 44.8 L-55.6 44.8 L-55.6 41.6 L-52.4 41.6 L-52.4 38.4 L-49.2 38.4 L-49.2 35.2 L-46.0 35.2 L-46.0 32.0 L-42.8 32.0 L-42.8 28.8 L-39.6 28.8 L-39.6 25.6 L-36.4 25.6 L-36.4 22.4 L-33.2 22.4 L-33.2 19.2 L-30.0 19.2 L-30.0 16.0 L-26.8 16.0 L-26.8 12.8 L-23.6 12.8 L-23.6 9.6 L-20.4 9.6 L-20.4 6.4 L-17.2 6.4 L-17.2 3.2 L-14.0 3.2 L-14.0 -0.0 L-10.8 -0.0 L-10.8 -3.2 L-7.6 -3.2 L-7.6 -6.4 L-4.4 -6.4 L-4.4 -9.6 L3.6 -9.6 L3.6 -6.4 L0.4 -6.4 L0.4 -3.2 L-2.8 -3.2 L-2.8 -0.0 L-6.0 -0.0 L-6.0 3.2 L-9.2 3.2 L-9.2 6.4 L-12.4 6.4 L-12.4 9.6 L-15.6 9.6 L-15.6 12.8 L-18.8 12.8 L-18.8 16.0 L-22.0 16.0 L-22.0 19.2 L-25.2 19.2 L-25.2 22.4 L-28.4 22.4 L-28.4 25.6 L-31.6 25.6 L-31.6 28.8 L-34.8 28.8 L-34.8 32.0 L-38.0 32.0 L-38.0 35.2 L-41.2 35.2 L-41.2 38.4 L-44.4 38.4 L-44.4 41.6 L-47.6 41.6 L-47.6 44.8 L-50.8 44.8 L-50.8 48.0 L-54.0 48.0 Z" fill="#3a4fb0"/><path d="M-54.0 48.0 L-50.8 48.0 L-50.8 44.8 L-47.6 44.8 L-47.6 41.6 L-44.4 41.6 L-44.4 38.4 L-41.2 38.4 L-41.2 35.2 L-38.0 35.2 L-38.0 32.0 L-34.8 32.0 L-34.8 28.8 L-31.6 28.8 L-31.6 25.6 L-28.4 25.6 L-28.4 22.4 L-25.2 22.4 L-25.2 19.2 L-22.0 19.2 L-22.0 16.0 L-18.8 16.0 L-18.8 12.8 L-15.6 12.8 L-15.6 9.6 L-12.4 9.6 L-12.4 6.4 L-9.2 6.4 L-9.2 3.2 L-6.0 3.2 L-6.0 -0.0 L-2.8 -0.0 L-2.8 -3.2 L0.4 -3.2 L0.4 -6.4 L3.6 -6.4 L3.6 -9.6 L11.6 -9.6 L11.6 -6.4 L8.4 -6.4 L8.4 -3.2 L5.2 -3.2 L5.2 -0.0 L2.0 -0.0 L2.0 3.2 L-1.2 3.2 L-1.2 6.4 L-4.4 6.4 L-4.4 9.6 L-7.6 9.6 L-7.6 12.8 L-10.8 12.8 L-10.8 16.0 L-14.0 16.0 L-14.0 19.2 L-17.2 19.2 L-17.2 22.4 L-20.4 22.4 L-20.4 25.6 L-23.6 25.6 L-23.6 28.8 L-26.8 28.8 L-26.8 32.0 L-30.0 32.0 L-30.0 35.2 L-33.2 35.2 L-33.2 38.4 L-36.4 38.4 L-36.4 41.6 L-39.6 41.6 L-39.6 44.8 L-42.8 44.8 L-42.8 48.0 L-46.0 48.0 Z" fill="#f4e23c"/><path d="M-46.0 48.0 L-42.8 48.0 L-42.8 44.8 L-39.6 44.8 L-39.6 41.6 L-36.4 41.6 L-36.4 38.4 L-33.2 38.4 L-33.2 35.2 L-30.0 35.2 L-30.0 32.0 L-26.8 32.0 L-26.8 28.8 L-23.6 28.8 L-23.6 25.6 L-20.4 25.6 L-20.4 22.4 L-17.2 22.4 L-17.2 19.2 L-14.0 19.2 L-14.0 16.0 L-10.8 16.0 L-10.8 12.8 L-7.6 12.8 L-7.6 9.6 L-4.4 9.6 L-4.4 6.4 L-1.2 6.4 L-1.2 3.2 L2.0 3.2 L2.0 -0.0 L5.2 -0.0 L5.2 -3.2 L8.4 -3.2 L8.4 -6.4 L11.6 -6.4 L11.6 -9.6 L19.6 -9.6 L19.6 -6.4 L16.4 -6.4 L16.4 -3.2 L13.2 -3.2 L13.2 -0.0 L10.0 -0.0 L10.0 3.2 L6.8 3.2 L6.8 6.4 L3.6 6.4 L3.6 9.6 L0.4 9.6 L0.4 12.8 L-2.8 12.8 L-2.8 16.0 L-6.0 16.0 L-6.0 19.2 L-9.2 19.2 L-9.2 22.4 L-12.4 22.4 L-12.4 25.6 L-15.6 25.6 L-15.6 28.8 L-18.8 28.8 L-18.8 32.0 L-22.0 32.0 L-22.0 35.2 L-25.2 35.2 L-25.2 38.4 L-28.4 38.4 L-28.4 41.6 L-31.6 41.6 L-31.6 44.8 L-34.8 44.8 L-34.8 48.0 L-38.0 48.0 Z" fill="#e9604c"/><path d="M-38.0 48.0 L-34.8 48.0 L-34.8 44.8 L-31.6 44.8 L-31.6 41.6 L-28.4 41.6 L-28.4 38.4 L-25.2 38.4 L-25.2 35.2 L-22.0 35.2 L-22.0 32.0 L-18.8 32.0 L-18.8 28.8 L-15.6 28.8 L-15.6 25.6 L-12.4 25.6 L-12.4 22.4 L-9.2 22.4 L-9.2 19.2 L-6.0 19.2 L-6.0 16.0 L-2.8 16.0 L-2.8 12.8 L0.4 12.8 L0.4 9.6 L3.6 9.6 L3.6 6.4 L6.8 6.4 L6.8 3.2 L10.0 3.2 L10.0 -0.0 L13.2 -0.0 L13.2 -3.2 L16.4 -3.2 L16.4 -6.4 L19.6 -6.4 L19.6 -9.6 L27.6 -9.6 L27.6 -6.4 L24.4 -6.4 L24.4 -3.2 L21.2 -3.2 L21.2 -0.0 L18.0 -0.0 L18.0 3.2 L14.8 3.2 L14.8 6.4 L11.6 6.4 L11.6 9.6 L8.4 9.6 L8.4 12.8 L5.2 12.8 L5.2 16.0 L2.0 16.0 L2.0 19.2 L-1.2 19.2 L-1.2 22.4 L-4.4 22.4 L-4.4 25.6 L-7.6 25.6 L-7.6 28.8 L-10.8 28.8 L-10.8 32.0 L-14.0 32.0 L-14.0 35.2 L-17.2 35.2 L-17.2 38.4 L-20.4 38.4 L-20.4 41.6 L-23.6 41.6 L-23.6 44.8 L-26.8 44.8 L-26.8 48.0 L-30.0 48.0 Z" fill="#7cc063"/><path d="M-30.0 48.0 L-26.8 48.0 L-26.8 44.8 L-23.6 44.8 L-23.6 41.6 L-20.4 41.6 L-20.4 38.4 L-17.2 38.4 L-17.2 35.2 L-14.0 35.2 L-14.0 32.0 L-10.8 32.0 L-10.8 28.8 L-7.6 28.8 L-7.6 25.6 L-4.4 25.6 L-4.4 22.4 L-1.2 22.4 L-1.2 19.2 L2.0 19.2 L2.0 16.0 L5.2 16.0 L5.2 12.8 L8.4 12.8 L8.4 9.6 L11.6 9.6 L11.6 6.4 L14.8 6.4 L14.8 3.2 L18.0 3.2 L18.0 -0.0 L21.2 -0.0 L21.2 -3.2 L24.4 -3.2 L24.4 -6.4 L27.6 -6.4 L27.6 -9.6 L35.6 -9.6 L35.6 -6.4 L32.4 -6.4 L32.4 -3.2 L29.2 -3.2 L29.2 -0.0 L26.0 -0.0 L26.0 3.2 L22.8 3.2 L22.8 6.4 L19.6 6.4 L19.6 9.6 L16.4 9.6 L16.4 12.8 L13.2 12.8 L13.2 16.0 L10.0 16.0 L10.0 19.2 L6.8 19.2 L6.8 22.4 L3.6 22.4 L3.6 25.6 L0.4 25.6 L0.4 28.8 L-2.8 28.8 L-2.8 32.0 L-6.0 32.0 L-6.0 35.2 L-9.2 35.2 L-9.2 38.4 L-12.4 38.4 L-12.4 41.6 L-15.6 41.6 L-15.6 44.8 L-18.8 44.8 L-18.8 48.0 L-22.0 48.0 Z" fill="#3a4fb0"/><path d="M-22.0 48.0 L-18.8 48.0 L-18.8 44.8 L-15.6 44.8 L-15.6 41.6 L-12.4 41.6 L-12.4 38.4 L-9.2 38.4 L-9.2 35.2 L-6.0 35.2 L-6.0 32.0 L-2.8 32.0 L-2.8 28.8 L0.4 28.8 L0.4 25.6 L3.6 25.6 L3.6 22.4 L6.8 22.4 L6.8 19.2 L10.0 19.2 L10.0 16.0 L13.2 16.0 L13.2 12.8 L16.4 12.8 L16.4 9.6 L19.6 9.6 L19.6 6.4 L22.8 6.4 L22.8 3.2 L26.0 3.2 L26.0 -0.0 L29.2 -0.0 L29.2 -3.2 L32.4 -3.2 L32.4 -6.4 L35.6 -6.4 L35.6 -9.6 L43.6 -9.6 L43.6 -6.4 L40.4 -6.4 L40.4 -3.2 L37.2 -3.2 L37.2 -0.0 L34.0 -0.0 L34.0 3.2 L30.8 3.2 L30.8 6.4 L27.6 6.4 L27.6 9.6 L24.4 9.6 L24.4 12.8 L21.2 12.8 L21.2 16.0 L18.0 16.0 L18.0 19.2 L14.8 19.2 L14.8 22.4 L11.6 22.4 L11.6 25.6 L8.4 25.6 L8.4 28.8 L5.2 28.8 L5.2 32.0 L2.0 32.0 L2.0 35.2 L-1.2 35.2 L-1.2 38.4 L-4.4 38.4 L-4.4 41.6 L-7.6 41.6 L-7.6 44.8 L-10.8 44.8 L-10.8 48.0 L-14.0 48.0 Z" fill="#f4e23c"/><path d="M-14.0 48.0 L-10.8 48.0 L-10.8 44.8 L-7.6 44.8 L-7.6 41.6 L-4.4 41.6 L-4.4 38.4 L-1.2 38.4 L-1.2 35.2 L2.0 35.2 L2.0 32.0 L5.2 32.0 L5.2 28.8 L8.4 28.8 L8.4 25.6 L11.6 25.6 L11.6 22.4 L14.8 22.4 L14.8 19.2 L18.0 19.2 L18.0 16.0 L21.2 16.0 L21.2 12.8 L24.4 12.8 L24.4 9.6 L27.6 9.6 L27.6 6.4 L30.8 6.4 L30.8 3.2 L34.0 3.2 L34.0 -0.0 L37.2 -0.0 L37.2 -3.2 L40.4 -3.2 L40.4 -6.4 L43.6 -6.4 L43.6 -9.6 L51.6 -9.6 L51.6 -6.4 L48.4 -6.4 L48.4 -3.2 L45.2 -3.2 L45.2 -0.0 L42.0 -0.0 L42.0 3.2 L38.8 3.2 L38.8 6.4 L35.6 6.4 L35.6 9.6 L32.4 9.6 L32.4 12.8 L29.2 12.8 L29.2 16.0 L26.0 16.0 L26.0 19.2 L22.8 19.2 L22.8 22.4 L19.6 22.4 L19.6 25.6 L16.4 25.6 L16.4 28.8 L13.2 28.8 L13.2 32.0 L10.0 32.0 L10.0 35.2 L6.8 35.2 L6.8 38.4 L3.6 38.4 L3.6 41.6 L0.4 41.6 L0.4 44.8 L-2.8 44.8 L-2.8 48.0 L-6.0 48.0 Z" fill="#e9604c"/><path d="M-6.0 48.0 L-2.8 48.0 L-2.8 44.8 L0.4 44.8 L0.4 41.6 L3.6 41.6 L3.6 38.4 L6.8 38.4 L6.8 35.2 L10.0 35.2 L10.0 32.0 L13.2 32.0 L13.2 28.8 L16.4 28.8 L16.4 25.6 L19.6 25.6 L19.6 22.4 L22.8 22.4 L22.8 19.2 L26.0 19.2 L26.0 16.0 L29.2 16.0 L29.2 12.8 L32.4 12.8 L32.4 9.6 L35.6 9.6 L35.6 6.4 L38.8 6.4 L38.8 3.2 L42.0 3.2 L42.0 -0.0 L45.2 -0.0 L45.2 -3.2 L48.4 -3.2 L48.4 -6.4 L51.6 -6.4 L51.6 -9.6 L59.6 -9.6 L59.6 -6.4 L56.4 -6.4 L56.4 -3.2 L53.2 -3.2 L53.2 -0.0 L50.0 -0.0 L50.0 3.2 L46.8 3.2 L46.8 6.4 L43.6 6.4 L43.6 9.6 L40.4 9.6 L40.4 12.8 L37.2 12.8 L37.2 16.0 L34.0 16.0 L34.0 19.2 L30.8 19.2 L30.8 22.4 L27.6 22.4 L27.6 25.6 L24.4 25.6 L24.4 28.8 L21.2 28.8 L21.2 32.0 L18.0 32.0 L18.0 35.2 L14.8 35.2 L14.8 38.4 L11.6 38.4 L11.6 41.6 L8.4 41.6 L8.4 44.8 L5.2 44.8 L5.2 48.0 L2.0 48.0 Z" fill="#7cc063"/><path d="M2.0 48.0 L5.2 48.0 L5.2 44.8 L8.4 44.8 L8.4 41.6 L11.6 41.6 L11.6 38.4 L14.8 38.4 L14.8 35.2 L18.0 35.2 L18.0 32.0 L21.2 32.0 L21.2 28.8 L24.4 28.8 L24.4 25.6 L27.6 25.6 L27.6 22.4 L30.8 22.4 L30.8 19.2 L34.0 19.2 L34.0 16.0 L37.2 16.0 L37.2 12.8 L40.4 12.8 L40.4 9.6 L43.6 9.6 L43.6 6.4 L46.8 6.4 L46.8 3.2 L50.0 3.2 L50.0 -0.0 L53.2 -0.0 L53.2 -3.2 L56.4 -3.2 L56.4 -6.4 L59.6 -6.4 L59.6 -9.6 L67.6 -9.6 L67.6 -6.4 L64.4 -6.4 L64.4 -3.2 L61.2 -3.2 L61.2 -0.0 L58.0 -0.0 L58.0 3.2 L54.8 3.2 L54.8 6.4 L51.6 6.4 L51.6 9.6 L48.4 9.6 L48.4 12.8 L45.2 12.8 L45.2 16.0 L42.0 16.0 L42.0 19.2 L38.8 19.2 L38.8 22.4 L35.6 22.4 L35.6 25.6 L32.4 25.6 L32.4 28.8 L29.2 28.8 L29.2 32.0 L26.0 32.0 L26.0 35.2 L22.8 35.2 L22.8 38.4 L19.6 38.4 L19.6 41.6 L16.4 41.6 L16.4 44.8 L13.2 44.8 L13.2 48.0 L10.0 48.0 Z" fill="#3a4fb0"/><path d="M10.0 48.0 L13.2 48.0 L13.2 44.8 L16.4 44.8 L16.4 41.6 L19.6 41.6 L19.6 38.4 L22.8 38.4 L22.8 35.2 L26.0 35.2 L26.0 32.0 L29.2 32.0 L29.2 28.8 L32.4 28.8 L32.4 25.6 L35.6 25.6 L35.6 22.4 L38.8 22.4 L38.8 19.2 L42.0 19.2 L42.0 16.0 L45.2 16.0 L45.2 12.8 L48.4 12.8 L48.4 9.6 L51.6 9.6 L51.6 6.4 L54.8 6.4 L54.8 3.2 L58.0 3.2 L58.0 -0.0 L61.2 -0.0 L61.2 -3.2 L64.4 -3.2 L64.4 -6.4 L67.6 -6.4 L67.6 -9.6 L75.6 -9.6 L75.6 -6.4 L72.4 -6.4 L72.4 -3.2 L69.2 -3.2 L69.2 -0.0 L66.0 -0.0 L66.0 3.2 L62.8 3.2 L62.8 6.4 L59.6 6.4 L59.6 9.6 L56.4 9.6 L56.4 12.8 L53.2 12.8 L53.2 16.0 L50.0 16.0 L50.0 19.2 L46.8 19.2 L46.8 22.4 L43.6 22.4 L43.6 25.6 L40.4 25.6 L40.4 28.8 L37.2 28.8 L37.2 32.0 L34.0 32.0 L34.0 35.2 L30.8 35.2 L30.8 38.4 L27.6 38.4 L27.6 41.6 L24.4 41.6 L24.4 44.8 L21.2 44.8 L21.2 48.0 L18.0 48.0 Z" fill="#f4e23c"/><path d="M18.0 48.0 L21.2 48.0 L21.2 44.8 L24.4 44.8 L24.4 41.6 L27.6 41.6 L27.6 38.4 L30.8 38.4 L30.8 35.2 L34.0 35.2 L34.0 32.0 L37.2 32.0 L37.2 28.8 L40.4 28.8 L40.4 25.6 L43.6 25.6 L43.6 22.4 L46.8 22.4 L46.8 19.2 L50.0 19.2 L50.0 16.0 L53.2 16.0 L53.2 12.8 L56.4 12.8 L56.4 9.6 L59.6 9.6 L59.6 6.4 L62.8 6.4 L62.8 3.2 L66.0 3.2 L66.0 -0.0 L69.2 -0.0 L69.2 -3.2 L72.4 -3.2 L72.4 -6.4 L75.6 -6.4 L75.6 -9.6 L83.6 -9.6 L83.6 -6.4 L80.4 -6.4 L80.4 -3.2 L77.2 -3.2 L77.2 -0.0 L74.0 -0.0 L74.0 3.2 L70.8 3.2 L70.8 6.4 L67.6 6.4 L67.6 9.6 L64.4 9.6 L64.4 12.8 L61.2 12.8 L61.2 16.0 L58.0 16.0 L58.0 19.2 L54.8 19.2 L54.8 22.4 L51.6 22.4 L51.6 25.6 L48.4 25.6 L48.4 28.8 L45.2 28.8 L45.2 32.0 L42.0 32.0 L42.0 35.2 L38.8 35.2 L38.8 38.4 L35.6 38.4 L35.6 41.6 L32.4 41.6 L32.4 44.8 L29.2 44.8 L29.2 48.0 L26.0 48.0 Z" fill="#e9604c"/><path d="M26.0 48.0 L29.2 48.0 L29.2 44.8 L32.4 44.8 L32.4 41.6 L35.6 41.6 L35.6 38.4 L38.8 38.4 L38.8 35.2 L42.0 35.2 L42.0 32.0 L45.2 32.0 L45.2 28.8 L48.4 28.8 L48.4 25.6 L51.6 25.6 L51.6 22.4 L54.8 22.4 L54.8 19.2 L58.0 19.2 L58.0 16.0 L61.2 16.0 L61.2 12.8 L64.4 12.8 L64.4 9.6 L67.6 9.6 L67.6 6.4 L70.8 6.4 L70.8 3.2 L74.0 3.2 L74.0 -0.0 L77.2 -0.0 L77.2 -3.2 L80.4 -3.2 L80.4 -6.4 L83.6 -6.4 L83.6 -9.6 L91.6 -9.6 L91.6 -6.4 L88.4 -6.4 L88.4 -3.2 L85.2 -3.2 L85.2 -0.0 L82.0 -0.0 L82.0 3.2 L78.8 3.2 L78.8 6.4 L75.6 6.4 L75.6 9.6 L72.4 9.6 L72.4 12.8 L69.2 12.8 L69.2 16.0 L66.0 16.0 L66.0 19.2 L62.8 19.2 L62.8 22.4 L59.6 22.4 L59.6 25.6 L56.4 25.6 L56.4 28.8 L53.2 28.8 L53.2 32.0 L50.0 32.0 L50.0 35.2 L46.8 35.2 L46.8 38.4 L43.6 38.4 L43.6 41.6 L40.4 41.6 L40.4 44.8 L37.2 44.8 L37.2 48.0 L34.0 48.0 Z" fill="#7cc063"/></g>
</g></svg>
<svg class="a" style="left:232.4px;top:537px" width="72" height="38" viewBox="0 0 72 38"><defs><linearGradient id="sk2" x1="0" y1="0" x2="0" y2="1"><stop offset="0" stop-color="#5ab0e2"/><stop offset="1" stop-color="#a0d2ee"/></linearGradient><clipPath id="fc2"><rect width="72" height="44" rx="3"/></clipPath><clipPath id="bl2"><ellipse cx="35.6" cy="38.5" rx="20.5" ry="28"/></clipPath></defs>
<g clip-path="url(#fc2)"><rect width="72" height="38" fill="url(#sk2)"/>
<ellipse cx="20" cy="16" rx="13" ry="8" fill="#eef3f2" opacity="0.7"/><ellipse cx="8" cy="30" rx="14" ry="10" fill="#e9efe9" opacity="0.6"/><ellipse cx="64" cy="28" rx="18" ry="13" fill="#f3f3e6"/><rect y="33" width="72" height="5" fill="#eeeedc"/>
<g clip-path="url(#bl2)" opacity="0.95"><path d="M-78.0 48.0 L-74.8 48.0 L-74.8 44.8 L-71.6 44.8 L-71.6 41.6 L-68.4 41.6 L-68.4 38.4 L-65.2 38.4 L-65.2 35.2 L-62.0 35.2 L-62.0 32.0 L-58.8 32.0 L-58.8 28.8 L-55.6 28.8 L-55.6 25.6 L-52.4 25.6 L-52.4 22.4 L-49.2 22.4 L-49.2 19.2 L-46.0 19.2 L-46.0 16.0 L-42.8 16.0 L-42.8 12.8 L-39.6 12.8 L-39.6 9.6 L-36.4 9.6 L-36.4 6.4 L-33.2 6.4 L-33.2 3.2 L-30.0 3.2 L-30.0 -0.0 L-26.8 -0.0 L-26.8 -3.2 L-23.6 -3.2 L-23.6 -6.4 L-20.4 -6.4 L-20.4 -9.6 L-12.4 -9.6 L-12.4 -6.4 L-15.6 -6.4 L-15.6 -3.2 L-18.8 -3.2 L-18.8 -0.0 L-22.0 -0.0 L-22.0 3.2 L-25.2 3.2 L-25.2 6.4 L-28.4 6.4 L-28.4 9.6 L-31.6 9.6 L-31.6 12.8 L-34.8 12.8 L-34.8 16.0 L-38.0 16.0 L-38.0 19.2 L-41.2 19.2 L-41.2 22.4 L-44.4 22.4 L-44.4 25.6 L-47.6 25.6 L-47.6 28.8 L-50.8 28.8 L-50.8 32.0 L-54.0 32.0 L-54.0 35.2 L-57.2 35.2 L-57.2 38.4 L-60.4 38.4 L-60.4 41.6 L-63.6 41.6 L-63.6 44.8 L-66.8 44.8 L-66.8 48.0 L-70.0 48.0 Z" fill="#e9604c"/><path d="M-70.0 48.0 L-66.8 48.0 L-66.8 44.8 L-63.6 44.8 L-63.6 41.6 L-60.4 41.6 L-60.4 38.4 L-57.2 38.4 L-57.2 35.2 L-54.0 35.2 L-54.0 32.0 L-50.8 32.0 L-50.8 28.8 L-47.6 28.8 L-47.6 25.6 L-44.4 25.6 L-44.4 22.4 L-41.2 22.4 L-41.2 19.2 L-38.0 19.2 L-38.0 16.0 L-34.8 16.0 L-34.8 12.8 L-31.6 12.8 L-31.6 9.6 L-28.4 9.6 L-28.4 6.4 L-25.2 6.4 L-25.2 3.2 L-22.0 3.2 L-22.0 -0.0 L-18.8 -0.0 L-18.8 -3.2 L-15.6 -3.2 L-15.6 -6.4 L-12.4 -6.4 L-12.4 -9.6 L-4.4 -9.6 L-4.4 -6.4 L-7.6 -6.4 L-7.6 -3.2 L-10.8 -3.2 L-10.8 -0.0 L-14.0 -0.0 L-14.0 3.2 L-17.2 3.2 L-17.2 6.4 L-20.4 6.4 L-20.4 9.6 L-23.6 9.6 L-23.6 12.8 L-26.8 12.8 L-26.8 16.0 L-30.0 16.0 L-30.0 19.2 L-33.2 19.2 L-33.2 22.4 L-36.4 22.4 L-36.4 25.6 L-39.6 25.6 L-39.6 28.8 L-42.8 28.8 L-42.8 32.0 L-46.0 32.0 L-46.0 35.2 L-49.2 35.2 L-49.2 38.4 L-52.4 38.4 L-52.4 41.6 L-55.6 41.6 L-55.6 44.8 L-58.8 44.8 L-58.8 48.0 L-62.0 48.0 Z" fill="#7cc063"/><path d="M-62.0 48.0 L-58.8 48.0 L-58.8 44.8 L-55.6 44.8 L-55.6 41.6 L-52.4 41.6 L-52.4 38.4 L-49.2 38.4 L-49.2 35.2 L-46.0 35.2 L-46.0 32.0 L-42.8 32.0 L-42.8 28.8 L-39.6 28.8 L-39.6 25.6 L-36.4 25.6 L-36.4 22.4 L-33.2 22.4 L-33.2 19.2 L-30.0 19.2 L-30.0 16.0 L-26.8 16.0 L-26.8 12.8 L-23.6 12.8 L-23.6 9.6 L-20.4 9.6 L-20.4 6.4 L-17.2 6.4 L-17.2 3.2 L-14.0 3.2 L-14.0 -0.0 L-10.8 -0.0 L-10.8 -3.2 L-7.6 -3.2 L-7.6 -6.4 L-4.4 -6.4 L-4.4 -9.6 L3.6 -9.6 L3.6 -6.4 L0.4 -6.4 L0.4 -3.2 L-2.8 -3.2 L-2.8 -0.0 L-6.0 -0.0 L-6.0 3.2 L-9.2 3.2 L-9.2 6.4 L-12.4 6.4 L-12.4 9.6 L-15.6 9.6 L-15.6 12.8 L-18.8 12.8 L-18.8 16.0 L-22.0 16.0 L-22.0 19.2 L-25.2 19.2 L-25.2 22.4 L-28.4 22.4 L-28.4 25.6 L-31.6 25.6 L-31.6 28.8 L-34.8 28.8 L-34.8 32.0 L-38.0 32.0 L-38.0 35.2 L-41.2 35.2 L-41.2 38.4 L-44.4 38.4 L-44.4 41.6 L-47.6 41.6 L-47.6 44.8 L-50.8 44.8 L-50.8 48.0 L-54.0 48.0 Z" fill="#3a4fb0"/><path d="M-54.0 48.0 L-50.8 48.0 L-50.8 44.8 L-47.6 44.8 L-47.6 41.6 L-44.4 41.6 L-44.4 38.4 L-41.2 38.4 L-41.2 35.2 L-38.0 35.2 L-38.0 32.0 L-34.8 32.0 L-34.8 28.8 L-31.6 28.8 L-31.6 25.6 L-28.4 25.6 L-28.4 22.4 L-25.2 22.4 L-25.2 19.2 L-22.0 19.2 L-22.0 16.0 L-18.8 16.0 L-18.8 12.8 L-15.6 12.8 L-15.6 9.6 L-12.4 9.6 L-12.4 6.4 L-9.2 6.4 L-9.2 3.2 L-6.0 3.2 L-6.0 -0.0 L-2.8 -0.0 L-2.8 -3.2 L0.4 -3.2 L0.4 -6.4 L3.6 -6.4 L3.6 -9.6 L11.6 -9.6 L11.6 -6.4 L8.4 -6.4 L8.4 -3.2 L5.2 -3.2 L5.2 -0.0 L2.0 -0.0 L2.0 3.2 L-1.2 3.2 L-1.2 6.4 L-4.4 6.4 L-4.4 9.6 L-7.6 9.6 L-7.6 12.8 L-10.8 12.8 L-10.8 16.0 L-14.0 16.0 L-14.0 19.2 L-17.2 19.2 L-17.2 22.4 L-20.4 22.4 L-20.4 25.6 L-23.6 25.6 L-23.6 28.8 L-26.8 28.8 L-26.8 32.0 L-30.0 32.0 L-30.0 35.2 L-33.2 35.2 L-33.2 38.4 L-36.4 38.4 L-36.4 41.6 L-39.6 41.6 L-39.6 44.8 L-42.8 44.8 L-42.8 48.0 L-46.0 48.0 Z" fill="#f4e23c"/><path d="M-46.0 48.0 L-42.8 48.0 L-42.8 44.8 L-39.6 44.8 L-39.6 41.6 L-36.4 41.6 L-36.4 38.4 L-33.2 38.4 L-33.2 35.2 L-30.0 35.2 L-30.0 32.0 L-26.8 32.0 L-26.8 28.8 L-23.6 28.8 L-23.6 25.6 L-20.4 25.6 L-20.4 22.4 L-17.2 22.4 L-17.2 19.2 L-14.0 19.2 L-14.0 16.0 L-10.8 16.0 L-10.8 12.8 L-7.6 12.8 L-7.6 9.6 L-4.4 9.6 L-4.4 6.4 L-1.2 6.4 L-1.2 3.2 L2.0 3.2 L2.0 -0.0 L5.2 -0.0 L5.2 -3.2 L8.4 -3.2 L8.4 -6.4 L11.6 -6.4 L11.6 -9.6 L19.6 -9.6 L19.6 -6.4 L16.4 -6.4 L16.4 -3.2 L13.2 -3.2 L13.2 -0.0 L10.0 -0.0 L10.0 3.2 L6.8 3.2 L6.8 6.4 L3.6 6.4 L3.6 9.6 L0.4 9.6 L0.4 12.8 L-2.8 12.8 L-2.8 16.0 L-6.0 16.0 L-6.0 19.2 L-9.2 19.2 L-9.2 22.4 L-12.4 22.4 L-12.4 25.6 L-15.6 25.6 L-15.6 28.8 L-18.8 28.8 L-18.8 32.0 L-22.0 32.0 L-22.0 35.2 L-25.2 35.2 L-25.2 38.4 L-28.4 38.4 L-28.4 41.6 L-31.6 41.6 L-31.6 44.8 L-34.8 44.8 L-34.8 48.0 L-38.0 48.0 Z" fill="#e9604c"/><path d="M-38.0 48.0 L-34.8 48.0 L-34.8 44.8 L-31.6 44.8 L-31.6 41.6 L-28.4 41.6 L-28.4 38.4 L-25.2 38.4 L-25.2 35.2 L-22.0 35.2 L-22.0 32.0 L-18.8 32.0 L-18.8 28.8 L-15.6 28.8 L-15.6 25.6 L-12.4 25.6 L-12.4 22.4 L-9.2 22.4 L-9.2 19.2 L-6.0 19.2 L-6.0 16.0 L-2.8 16.0 L-2.8 12.8 L0.4 12.8 L0.4 9.6 L3.6 9.6 L3.6 6.4 L6.8 6.4 L6.8 3.2 L10.0 3.2 L10.0 -0.0 L13.2 -0.0 L13.2 -3.2 L16.4 -3.2 L16.4 -6.4 L19.6 -6.4 L19.6 -9.6 L27.6 -9.6 L27.6 -6.4 L24.4 -6.4 L24.4 -3.2 L21.2 -3.2 L21.2 -0.0 L18.0 -0.0 L18.0 3.2 L14.8 3.2 L14.8 6.4 L11.6 6.4 L11.6 9.6 L8.4 9.6 L8.4 12.8 L5.2 12.8 L5.2 16.0 L2.0 16.0 L2.0 19.2 L-1.2 19.2 L-1.2 22.4 L-4.4 22.4 L-4.4 25.6 L-7.6 25.6 L-7.6 28.8 L-10.8 28.8 L-10.8 32.0 L-14.0 32.0 L-14.0 35.2 L-17.2 35.2 L-17.2 38.4 L-20.4 38.4 L-20.4 41.6 L-23.6 41.6 L-23.6 44.8 L-26.8 44.8 L-26.8 48.0 L-30.0 48.0 Z" fill="#7cc063"/><path d="M-30.0 48.0 L-26.8 48.0 L-26.8 44.8 L-23.6 44.8 L-23.6 41.6 L-20.4 41.6 L-20.4 38.4 L-17.2 38.4 L-17.2 35.2 L-14.0 35.2 L-14.0 32.0 L-10.8 32.0 L-10.8 28.8 L-7.6 28.8 L-7.6 25.6 L-4.4 25.6 L-4.4 22.4 L-1.2 22.4 L-1.2 19.2 L2.0 19.2 L2.0 16.0 L5.2 16.0 L5.2 12.8 L8.4 12.8 L8.4 9.6 L11.6 9.6 L11.6 6.4 L14.8 6.4 L14.8 3.2 L18.0 3.2 L18.0 -0.0 L21.2 -0.0 L21.2 -3.2 L24.4 -3.2 L24.4 -6.4 L27.6 -6.4 L27.6 -9.6 L35.6 -9.6 L35.6 -6.4 L32.4 -6.4 L32.4 -3.2 L29.2 -3.2 L29.2 -0.0 L26.0 -0.0 L26.0 3.2 L22.8 3.2 L22.8 6.4 L19.6 6.4 L19.6 9.6 L16.4 9.6 L16.4 12.8 L13.2 12.8 L13.2 16.0 L10.0 16.0 L10.0 19.2 L6.8 19.2 L6.8 22.4 L3.6 22.4 L3.6 25.6 L0.4 25.6 L0.4 28.8 L-2.8 28.8 L-2.8 32.0 L-6.0 32.0 L-6.0 35.2 L-9.2 35.2 L-9.2 38.4 L-12.4 38.4 L-12.4 41.6 L-15.6 41.6 L-15.6 44.8 L-18.8 44.8 L-18.8 48.0 L-22.0 48.0 Z" fill="#3a4fb0"/><path d="M-22.0 48.0 L-18.8 48.0 L-18.8 44.8 L-15.6 44.8 L-15.6 41.6 L-12.4 41.6 L-12.4 38.4 L-9.2 38.4 L-9.2 35.2 L-6.0 35.2 L-6.0 32.0 L-2.8 32.0 L-2.8 28.8 L0.4 28.8 L0.4 25.6 L3.6 25.6 L3.6 22.4 L6.8 22.4 L6.8 19.2 L10.0 19.2 L10.0 16.0 L13.2 16.0 L13.2 12.8 L16.4 12.8 L16.4 9.6 L19.6 9.6 L19.6 6.4 L22.8 6.4 L22.8 3.2 L26.0 3.2 L26.0 -0.0 L29.2 -0.0 L29.2 -3.2 L32.4 -3.2 L32.4 -6.4 L35.6 -6.4 L35.6 -9.6 L43.6 -9.6 L43.6 -6.4 L40.4 -6.4 L40.4 -3.2 L37.2 -3.2 L37.2 -0.0 L34.0 -0.0 L34.0 3.2 L30.8 3.2 L30.8 6.4 L27.6 6.4 L27.6 9.6 L24.4 9.6 L24.4 12.8 L21.2 12.8 L21.2 16.0 L18.0 16.0 L18.0 19.2 L14.8 19.2 L14.8 22.4 L11.6 22.4 L11.6 25.6 L8.4 25.6 L8.4 28.8 L5.2 28.8 L5.2 32.0 L2.0 32.0 L2.0 35.2 L-1.2 35.2 L-1.2 38.4 L-4.4 38.4 L-4.4 41.6 L-7.6 41.6 L-7.6 44.8 L-10.8 44.8 L-10.8 48.0 L-14.0 48.0 Z" fill="#f4e23c"/><path d="M-14.0 48.0 L-10.8 48.0 L-10.8 44.8 L-7.6 44.8 L-7.6 41.6 L-4.4 41.6 L-4.4 38.4 L-1.2 38.4 L-1.2 35.2 L2.0 35.2 L2.0 32.0 L5.2 32.0 L5.2 28.8 L8.4 28.8 L8.4 25.6 L11.6 25.6 L11.6 22.4 L14.8 22.4 L14.8 19.2 L18.0 19.2 L18.0 16.0 L21.2 16.0 L21.2 12.8 L24.4 12.8 L24.4 9.6 L27.6 9.6 L27.6 6.4 L30.8 6.4 L30.8 3.2 L34.0 3.2 L34.0 -0.0 L37.2 -0.0 L37.2 -3.2 L40.4 -3.2 L40.4 -6.4 L43.6 -6.4 L43.6 -9.6 L51.6 -9.6 L51.6 -6.4 L48.4 -6.4 L48.4 -3.2 L45.2 -3.2 L45.2 -0.0 L42.0 -0.0 L42.0 3.2 L38.8 3.2 L38.8 6.4 L35.6 6.4 L35.6 9.6 L32.4 9.6 L32.4 12.8 L29.2 12.8 L29.2 16.0 L26.0 16.0 L26.0 19.2 L22.8 19.2 L22.8 22.4 L19.6 22.4 L19.6 25.6 L16.4 25.6 L16.4 28.8 L13.2 28.8 L13.2 32.0 L10.0 32.0 L10.0 35.2 L6.8 35.2 L6.8 38.4 L3.6 38.4 L3.6 41.6 L0.4 41.6 L0.4 44.8 L-2.8 44.8 L-2.8 48.0 L-6.0 48.0 Z" fill="#e9604c"/><path d="M-6.0 48.0 L-2.8 48.0 L-2.8 44.8 L0.4 44.8 L0.4 41.6 L3.6 41.6 L3.6 38.4 L6.8 38.4 L6.8 35.2 L10.0 35.2 L10.0 32.0 L13.2 32.0 L13.2 28.8 L16.4 28.8 L16.4 25.6 L19.6 25.6 L19.6 22.4 L22.8 22.4 L22.8 19.2 L26.0 19.2 L26.0 16.0 L29.2 16.0 L29.2 12.8 L32.4 12.8 L32.4 9.6 L35.6 9.6 L35.6 6.4 L38.8 6.4 L38.8 3.2 L42.0 3.2 L42.0 -0.0 L45.2 -0.0 L45.2 -3.2 L48.4 -3.2 L48.4 -6.4 L51.6 -6.4 L51.6 -9.6 L59.6 -9.6 L59.6 -6.4 L56.4 -6.4 L56.4 -3.2 L53.2 -3.2 L53.2 -0.0 L50.0 -0.0 L50.0 3.2 L46.8 3.2 L46.8 6.4 L43.6 6.4 L43.6 9.6 L40.4 9.6 L40.4 12.8 L37.2 12.8 L37.2 16.0 L34.0 16.0 L34.0 19.2 L30.8 19.2 L30.8 22.4 L27.6 22.4 L27.6 25.6 L24.4 25.6 L24.4 28.8 L21.2 28.8 L21.2 32.0 L18.0 32.0 L18.0 35.2 L14.8 35.2 L14.8 38.4 L11.6 38.4 L11.6 41.6 L8.4 41.6 L8.4 44.8 L5.2 44.8 L5.2 48.0 L2.0 48.0 Z" fill="#7cc063"/><path d="M2.0 48.0 L5.2 48.0 L5.2 44.8 L8.4 44.8 L8.4 41.6 L11.6 41.6 L11.6 38.4 L14.8 38.4 L14.8 35.2 L18.0 35.2 L18.0 32.0 L21.2 32.0 L21.2 28.8 L24.4 28.8 L24.4 25.6 L27.6 25.6 L27.6 22.4 L30.8 22.4 L30.8 19.2 L34.0 19.2 L34.0 16.0 L37.2 16.0 L37.2 12.8 L40.4 12.8 L40.4 9.6 L43.6 9.6 L43.6 6.4 L46.8 6.4 L46.8 3.2 L50.0 3.2 L50.0 -0.0 L53.2 -0.0 L53.2 -3.2 L56.4 -3.2 L56.4 -6.4 L59.6 -6.4 L59.6 -9.6 L67.6 -9.6 L67.6 -6.4 L64.4 -6.4 L64.4 -3.2 L61.2 -3.2 L61.2 -0.0 L58.0 -0.0 L58.0 3.2 L54.8 3.2 L54.8 6.4 L51.6 6.4 L51.6 9.6 L48.4 9.6 L48.4 12.8 L45.2 12.8 L45.2 16.0 L42.0 16.0 L42.0 19.2 L38.8 19.2 L38.8 22.4 L35.6 22.4 L35.6 25.6 L32.4 25.6 L32.4 28.8 L29.2 28.8 L29.2 32.0 L26.0 32.0 L26.0 35.2 L22.8 35.2 L22.8 38.4 L19.6 38.4 L19.6 41.6 L16.4 41.6 L16.4 44.8 L13.2 44.8 L13.2 48.0 L10.0 48.0 Z" fill="#3a4fb0"/><path d="M10.0 48.0 L13.2 48.0 L13.2 44.8 L16.4 44.8 L16.4 41.6 L19.6 41.6 L19.6 38.4 L22.8 38.4 L22.8 35.2 L26.0 35.2 L26.0 32.0 L29.2 32.0 L29.2 28.8 L32.4 28.8 L32.4 25.6 L35.6 25.6 L35.6 22.4 L38.8 22.4 L38.8 19.2 L42.0 19.2 L42.0 16.0 L45.2 16.0 L45.2 12.8 L48.4 12.8 L48.4 9.6 L51.6 9.6 L51.6 6.4 L54.8 6.4 L54.8 3.2 L58.0 3.2 L58.0 -0.0 L61.2 -0.0 L61.2 -3.2 L64.4 -3.2 L64.4 -6.4 L67.6 -6.4 L67.6 -9.6 L75.6 -9.6 L75.6 -6.4 L72.4 -6.4 L72.4 -3.2 L69.2 -3.2 L69.2 -0.0 L66.0 -0.0 L66.0 3.2 L62.8 3.2 L62.8 6.4 L59.6 6.4 L59.6 9.6 L56.4 9.6 L56.4 12.8 L53.2 12.8 L53.2 16.0 L50.0 16.0 L50.0 19.2 L46.8 19.2 L46.8 22.4 L43.6 22.4 L43.6 25.6 L40.4 25.6 L40.4 28.8 L37.2 28.8 L37.2 32.0 L34.0 32.0 L34.0 35.2 L30.8 35.2 L30.8 38.4 L27.6 38.4 L27.6 41.6 L24.4 41.6 L24.4 44.8 L21.2 44.8 L21.2 48.0 L18.0 48.0 Z" fill="#f4e23c"/><path d="M18.0 48.0 L21.2 48.0 L21.2 44.8 L24.4 44.8 L24.4 41.6 L27.6 41.6 L27.6 38.4 L30.8 38.4 L30.8 35.2 L34.0 35.2 L34.0 32.0 L37.2 32.0 L37.2 28.8 L40.4 28.8 L40.4 25.6 L43.6 25.6 L43.6 22.4 L46.8 22.4 L46.8 19.2 L50.0 19.2 L50.0 16.0 L53.2 16.0 L53.2 12.8 L56.4 12.8 L56.4 9.6 L59.6 9.6 L59.6 6.4 L62.8 6.4 L62.8 3.2 L66.0 3.2 L66.0 -0.0 L69.2 -0.0 L69.2 -3.2 L72.4 -3.2 L72.4 -6.4 L75.6 -6.4 L75.6 -9.6 L83.6 -9.6 L83.6 -6.4 L80.4 -6.4 L80.4 -3.2 L77.2 -3.2 L77.2 -0.0 L74.0 -0.0 L74.0 3.2 L70.8 3.2 L70.8 6.4 L67.6 6.4 L67.6 9.6 L64.4 9.6 L64.4 12.8 L61.2 12.8 L61.2 16.0 L58.0 16.0 L58.0 19.2 L54.8 19.2 L54.8 22.4 L51.6 22.4 L51.6 25.6 L48.4 25.6 L48.4 28.8 L45.2 28.8 L45.2 32.0 L42.0 32.0 L42.0 35.2 L38.8 35.2 L38.8 38.4 L35.6 38.4 L35.6 41.6 L32.4 41.6 L32.4 44.8 L29.2 44.8 L29.2 48.0 L26.0 48.0 Z" fill="#e9604c"/><path d="M26.0 48.0 L29.2 48.0 L29.2 44.8 L32.4 44.8 L32.4 41.6 L35.6 41.6 L35.6 38.4 L38.8 38.4 L38.8 35.2 L42.0 35.2 L42.0 32.0 L45.2 32.0 L45.2 28.8 L48.4 28.8 L48.4 25.6 L51.6 25.6 L51.6 22.4 L54.8 22.4 L54.8 19.2 L58.0 19.2 L58.0 16.0 L61.2 16.0 L61.2 12.8 L64.4 12.8 L64.4 9.6 L67.6 9.6 L67.6 6.4 L70.8 6.4 L70.8 3.2 L74.0 3.2 L74.0 -0.0 L77.2 -0.0 L77.2 -3.2 L80.4 -3.2 L80.4 -6.4 L83.6 -6.4 L83.6 -9.6 L91.6 -9.6 L91.6 -6.4 L88.4 -6.4 L88.4 -3.2 L85.2 -3.2 L85.2 -0.0 L82.0 -0.0 L82.0 3.2 L78.8 3.2 L78.8 6.4 L75.6 6.4 L75.6 9.6 L72.4 9.6 L72.4 12.8 L69.2 12.8 L69.2 16.0 L66.0 16.0 L66.0 19.2 L62.8 19.2 L62.8 22.4 L59.6 22.4 L59.6 25.6 L56.4 25.6 L56.4 28.8 L53.2 28.8 L53.2 32.0 L50.0 32.0 L50.0 35.2 L46.8 35.2 L46.8 38.4 L43.6 38.4 L43.6 41.6 L40.4 41.6 L40.4 44.8 L37.2 44.8 L37.2 48.0 L34.0 48.0 Z" fill="#7cc063"/></g>
<rect width="72" height="38" fill="url(#fade)"/></g></svg>
<div id="vline" class="a"></div>
<div id="tool" class="a"></div>
<div class="a" style="left:333px;top:52px;width:18px;height:18px;border-radius:2px;background:radial-gradient(circle at 50% 50%,#fff 0,rgba(255,255,255,.85) 18%,rgba(255,255,255,0) 62%),conic-gradient(from 0deg,#ff2a2a,#ffe600 60deg,#ff8800 100deg,#ffee00 130deg,#38ff2a 190deg,#16e8ff 250deg,#2a2aff 300deg,#ff22e0 340deg,#ff2a2a)"></div>
<div class="a" style="left:360.5px;top:52px;width:1px;height:18px;background:#e3e5e8"></div>
<div class="a" style="left:367px;top:49px;width:70.5px;height:23.5px;border-radius:4px;background:#e3e5ea"></div>
<div class="a tb" style="left:375.5px">Edit image</div>
<div class="a tb" style="left:448.6px">Crop</div>
<div class="a tb" style="left:493px">Flip</div>
<svg class="a" style="left:526px;top:51.6px" width="17" height="17" viewBox="0 0 17 17"><circle cx="8.5" cy="8.5" r="6.85" fill="none" stroke="#15191f" stroke-width="1.3"/><path d="M8.5 7.6 V11.8" stroke="#15191f" stroke-width="1.5" stroke-linecap="round"/><circle cx="8.5" cy="5.2" r="0.95" fill="#15191f"/></svg>
<div class="a" style="left:552px;top:52px;width:1px;height:17px;background:#e3e5e8"></div>
<svg class="a" style="left:562px;top:51px" width="19" height="19" viewBox="0 0 19 19"><circle cx="7" cy="11.8" r="4.8" fill="#fff" stroke="#c2c4c9" stroke-width="1.1"/><circle cx="9.2" cy="9.6" r="4.8" fill="#fff" stroke="#8a8d94" stroke-width="1.1"/><circle cx="11.35" cy="7.4" r="4.8" fill="#fff" stroke="#1b1f26" stroke-width="1.3"/></svg>
<div class="a tb" style="left:586.5px">Animate</div>
<div class="a" style="left:644px;top:52px;width:1px;height:17px;background:#e3e5e8"></div>
<svg class="a" style="left:654px;top:51.6px" width="17" height="17" viewBox="0 0 17 17"><circle cx="8.5" cy="8.5" r="6.85" fill="none" stroke="#15191f" stroke-width="1.3"/><path d="M8.3 4.7 V9.3 L11.2 11.8" fill="none" stroke="#15191f" stroke-width="1.3" stroke-linecap="round" stroke-linejoin="round"/></svg>
<div class="a tb" style="left:677.5px">5.0s</div>
<svg class="a" style="left:935px;top:52px" width="17" height="17" viewBox="0 0 17 17">
<rect x="1" y="1" width="3" height="3" rx="1.2" fill="#0e1318"/><rect x="1" y="7" width="3" height="3" rx="1.2" fill="#0e1318"/><rect x="1" y="13" width="3" height="3" rx="1.2" fill="#0e1318"/><rect x="4" y="4" width="3" height="3" rx="1.2" fill="#555"/><rect x="4" y="10" width="3" height="3" rx="1.2" fill="#555"/><rect x="7" y="1" width="3" height="3" rx="1.2" fill="#8a8a8a"/><rect x="7" y="7" width="3" height="3" rx="1.2" fill="#8a8a8a"/><rect x="7" y="13" width="3" height="3" rx="1.2" fill="#8a8a8a"/><rect x="10" y="4" width="3" height="3" rx="1.2" fill="#bcbcbc"/><rect x="10" y="10" width="3" height="3" rx="1.2" fill="#bcbcbc"/><rect x="13" y="1" width="3" height="3" rx="1.2" fill="#e0e0e0"/><rect x="13" y="7" width="3" height="3" rx="1.2" fill="#e0e0e0"/><rect x="13" y="13" width="3" height="3" rx="1.2" fill="#e0e0e0"/></svg>
<div class="a" style="left:962.5px;top:52px;width:1px;height:18px;background:#e3e5e8"></div>
<svg class="a" style="left:972px;top:50px" width="16" height="19" viewBox="0 0 16 19"><path d="M5.3 7.8 V5.6 A3.9 3.9 0 0 1 13.1 5.6 V5.8" fill="none" stroke="#0e1318" stroke-width="1.4" stroke-linecap="round"/><rect x="2.9" y="8" width="11.4" height="9" rx="1.5" fill="none" stroke="#0e1318" stroke-width="1.4"/><path d="M8.6 11.4 V14.4" stroke="#0e1318" stroke-width="1.4"/><circle cx="8.6" cy="11.5" r="1.15" fill="#0e1318"/></svg>
<svg class="a" style="left:998px;top:51px" width="16" height="18" viewBox="0 0 16 18"><path d="M1.8 4.2 H14.2 M5.5 4.2 V2.6 A1.2 1.2 0 0 1 6.7 1.4 H9.3 A1.2 1.2 0 0 1 10.5 2.6 V4.2" fill="none" stroke="#0e1318" stroke-width="1.4"/><path d="M3.2 4.2 L3.8 15 A1.8 1.8 0 0 0 5.6 16.6 H10.4 A1.8 1.8 0 0 0 12.2 15 L12.8 4.2" fill="none" stroke="#0e1318" stroke-width="1.4"/><path d="M6.3 7.2 V13.2 M9.7 7.2 V13.2" stroke="#0e1318" stroke-width="1.4"/></svg>

<div id="rh" class="a"></div>
<svg class="a" style="left:342px;top:79px" width="669" height="19" viewBox="0 0 669 19">
<path d="M50.60 0.5 V18 M58.01 15.4 V18 M65.42 13.8 V18 M72.82 15.4 V18 M80.23 0.5 V18 M87.64 15.4 V18 M95.05 13.8 V18 M102.45 15.4 V18 M109.86 0.5 V18 M117.27 15.4 V18 M124.68 13.8 V18 M132.08 15.4 V18 M139.49 0.5 V18 M146.90 15.4 V18 M154.31 13.8 V18 M161.71 15.4 V18 M169.12 0.5 V18 M176.53 15.4 V18 M183.94 13.8 V18 M191.34 15.4 V18 M198.75 0.5 V18 M206.16 15.4 V18 M213.57 13.8 V18 M220.97 15.4 V18 M228.38 0.5 V18 M235.79 15.4 V18 M243.20 13.8 V18 M250.60 15.4 V18 M258.01 0.5 V18 M265.42 15.4 V18 M272.83 13.8 V18 M280.23 15.4 V18 M287.64 0.5 V18 M295.05 15.4 V18 M302.46 13.8 V18 M309.86 15.4 V18 M317.27 0.5 V18 M324.68 15.4 V18 M332.09 13.8 V18 M339.49 15.4 V18 M346.90 0.5 V18 M354.31 15.4 V18 M361.72 13.8 V18 M369.12 15.4 V18 M376.53 0.5 V18 M383.94 15.4 V18 M391.35 13.8 V18 M398.75 15.4 V18 M406.16 0.5 V18 M413.57 15.4 V18 M420.98 13.8 V18 M428.38 15.4 V18 M435.79 0.5 V18 M443.20 15.4 V18 M450.61 13.8 V18 M458.01 15.4 V18 M465.42 0.5 V18 M472.83 15.4 V18 M480.24 13.8 V18 M487.64 15.4 V18 M495.05 0.5 V18 M502.46 15.4 V18 M509.87 13.8 V18 M517.27 15.4 V18 M524.68 0.5 V18 M532.09 15.4 V18 M539.50 13.8 V18 M546.90 15.4 V18 M554.31 0.5 V18 M561.72 15.4 V18 M569.12 13.8 V18 M576.53 15.4 V18 M583.94 0.5 V18 M591.35 15.4 V18 M598.75 13.8 V18 M606.16 15.4 V18 M613.57 0.5 V18" stroke="#c9ccd1" stroke-width="1"/>
<text x="54.00" y="11" font-size="7.5" letter-spacing="0.75" fill="#7a7f88" font-family="Liberation Sans">0</text>
<text x="83.63" y="11" font-size="7.5" letter-spacing="0.75" fill="#7a7f88" font-family="Liberation Sans">100</text>
<text x="113.26" y="11" font-size="7.5" letter-spacing="0.75" fill="#7a7f88" font-family="Liberation Sans">200</text>
<text x="142.89" y="11" font-size="7.5" letter-spacing="0.75" fill="#7a7f88" font-family="Liberation Sans">300</text>
<text x="172.52" y="11" font-size="7.5" letter-spacing="0.75" fill="#7a7f88" font-family="Liberation Sans">400</text>
<text x="202.15" y="11" font-size="7.5" letter-spacing="0.75" fill="#7a7f88" font-family="Liberation Sans">500</text>
<text x="231.78" y="11" font-size="7.5" letter-spacing="0.75" fill="#7a7f88" font-family="Liberation Sans">600</text>
<text x="261.41" y="11" font-size="7.5" letter-spacing="0.75" fill="#7a7f88" font-family="Liberation Sans">700</text>
<text x="291.04" y="11" font-size="7.5" letter-spacing="0.75" fill="#7a7f88" font-family="Liberation Sans">800</text>
<text x="320.67" y="11" font-size="7.5" letter-spacing="0.75" fill="#7a7f88" font-family="Liberation Sans">900</text>
<text x="350.30" y="11" font-size="7.5" letter-spacing="0.75" fill="#7a7f88" font-family="Liberation Sans">1000</text>
<text x="379.93" y="11" font-size="7.5" letter-spacing="0.75" fill="#7a7f88" font-family="Liberation Sans">1100</text>
<text x="409.56" y="11" font-size="7.5" letter-spacing="0.75" fill="#7a7f88" font-family="Liberation Sans">1200</text>
<text x="439.19" y="11" font-size="7.5" letter-spacing="0.75" fill="#7a7f88" font-family="Liberation Sans">1300</text>
<text x="468.82" y="11" font-size="7.5" letter-spacing="0.75" fill="#7a7f88" font-family="Liberation Sans">1400</text>
<text x="498.45" y="11" font-size="7.5" letter-spacing="0.75" fill="#7a7f88" font-family="Liberation Sans">1500</text>
<text x="528.08" y="11" font-size="7.5" letter-spacing="0.75" fill="#7a7f88" font-family="Liberation Sans">1600</text>
<text x="557.71" y="11" font-size="7.5" letter-spacing="0.75" fill="#7a7f88" font-family="Liberation Sans">1700</text>
<text x="587.34" y="11" font-size="7.5" letter-spacing="0.75" fill="#7a7f88" font-family="Liberation Sans">1800</text>
<text x="616.97" y="11" font-size="7.5" letter-spacing="0.75" fill="#7a7f88" font-family="Liberation Sans">1900</text>
</svg>
<div id="rv" class="a"></div>
<svg class="a" style="left:324px;top:97px" width="19" height="435" viewBox="0 0 19 435">
<path d="M0 43.40 H18 M14.5 50.81 H18 M13 58.22 H18 M14.5 65.62 H18 M0 73.03 H18 M14.5 80.44 H18 M13 87.84 H18 M14.5 95.25 H18 M0 102.66 H18 M14.5 110.07 H18 M13 117.48 H18 M14.5 124.88 H18 M0 132.29 H18 M14.5 139.70 H18 M13 147.11 H18 M14.5 154.51 H18 M0 161.92 H18 M14.5 169.33 H18 M13 176.74 H18 M14.5 184.14 H18 M0 191.55 H18 M14.5 198.96 H18 M13 206.37 H18 M14.5 213.77 H18 M0 221.18 H18 M14.5 228.59 H18 M13 236.00 H18 M14.5 243.40 H18 M0 250.81 H18 M14.5 258.22 H18 M13 265.62 H18 M14.5 273.03 H18 M0 280.44 H18 M14.5 287.85 H18 M13 295.25 H18 M14.5 302.66 H18 M0 310.07 H18 M14.5 317.48 H18 M13 324.88 H18 M14.5 332.29 H18 M0 339.70 H18 M14.5 347.11 H18 M13 354.51 H18 M14.5 361.92 H18 M0 369.33 H18" stroke="#c9ccd1" stroke-width="1"/>
<text transform="translate(10.6 47.20) rotate(-90)" text-anchor="end" font-size="7.5" letter-spacing="0.75" fill="#7a7f88" font-family="Liberation Sans">0</text>
<text transform="translate(10.6 76.83) rotate(-90)" text-anchor="end" font-size="7.5" letter-spacing="0.75" fill="#7a7f88" font-family="Liberation Sans">100</text>
<text transform="translate(10.6 106.46) rotate(-90)" text-anchor="end" font-size="7.5" letter-spacing="0.75" fill="#7a7f88" font-family="Liberation Sans">200</text>
<text transform="translate(10.6 136.09) rotate(-90)" text-anchor="end" font-size="7.5" letter-spacing="0.75" fill="#7a7f88" font-family="Liberation Sans">300</text>
<text transform="translate(10.6 165.72) rotate(-90)" text-anchor="end" font-size="7.5" letter-spacing="0.75" fill="#7a7f88" font-family="Liberation Sans">400</text>
<text transform="translate(10.6 195.35) rotate(-90)" text-anchor="end" font-size="7.5" letter-spacing="0.75" fill="#7a7f88" font-family="Liberation Sans">500</text>
<text transform="translate(10.6 224.98) rotate(-90)" text-anchor="end" font-size="7.5" letter-spacing="0.75" fill="#7a7f88" font-family="Liberation Sans">600</text>
<text transform="translate(10.6 254.61) rotate(-90)" text-anchor="end" font-size="7.5" letter-spacing="0.75" fill="#7a7f88" font-family="Liberation Sans">700</text>
<text transform="translate(10.6 284.24) rotate(-90)" text-anchor="end" font-size="7.5" letter-spacing="0.75" fill="#7a7f88" font-family="Liberation Sans">800</text>
<text transform="translate(10.6 313.87) rotate(-90)" text-anchor="end" font-size="7.5" letter-spacing="0.75" fill="#7a7f88" font-family="Liberation Sans">900</text>
<text transform="translate(10.6 343.50) rotate(-90)" text-anchor="end" font-size="7.5" letter-spacing="0.75" fill="#7a7f88" font-family="Liberation Sans">1000</text>
<text transform="translate(10.6 373.13) rotate(-90)" text-anchor="end" font-size="7.5" letter-spacing="0.75" fill="#7a7f88" font-family="Liberation Sans">1100</text>
</svg>
<div id="corner" class="a"></div>
<div id="canvas" class="a"></div>
<div id="vs" class="a"></div>
<div id="hs" class="a"></div>
<div id="hsc" class="a"></div>
<div id="bot" class="a"></div>
<div id="page" class="a"></div>
<div id="circle" class="a"></div>
<div id="addpage" class="a">+ Add page</div>
<div class="a" style="left:649px;top:98px;width:55px;height:20px;border-radius:0 0 4px 4px;background:#fff;box-shadow:0 1px 3px rgba(0,0,0,.1)"></div>
<svg class="a" style="left:656px;top:98px" width="15" height="13" viewBox="0 8 15 13"><path d="M2.8 6 L3.4 17.4 A1.6 1.6 0 0 0 5 19 H10 A1.6 1.6 0 0 0 11.6 17.4 L12.2 6" fill="none" stroke="#0e1318" stroke-width="1.4"/><path d="M6.1 9 V15.8 M8.9 9 V15.8" stroke="#0e1318" stroke-width="1.4"/></svg>
<svg class="a" style="left:680px;top:99px" width="18" height="7" viewBox="0 0 18 7"><circle cx="4" cy="3.5" r="1.55" fill="#0e1318"/><circle cx="9.2" cy="3.5" r="1.55" fill="#0e1318"/><circle cx="14.5" cy="3.5" r="1.55" fill="#0e1318"/></svg>
<svg class="a" style="left:890px;top:118px" width="15" height="16" viewBox="0 0 15 16"><path d="M4.2 7 V5 A3.2 3.2 0 0 1 10.6 4.4" fill="none" stroke="#50545c" stroke-width="1.2" stroke-linecap="round"/><rect x="2.4" y="7" width="10.2" height="7.6" rx="1.4" fill="none" stroke="#50545c" stroke-width="1.2"/><path d="M7.5 9.3 V12.4" stroke="#50545c" stroke-width="1.3"/><circle cx="7.5" cy="9.6" r="1" fill="#50545c"/></svg>
<svg class="a" style="left:917px;top:118px" width="15" height="16" viewBox="0 0 15 16"><path d="M4 11.8 H2.8 A1.2 1.2 0 0 1 1.6 10.6 V3.2 A1.2 1.2 0 0 1 2.8 2 H9.6 A1.2 1.2 0 0 1 10.8 3.2 V4.4" fill="none" stroke="#50545c" stroke-width="1.2"/><rect x="4.4" y="4.8" width="9" height="9.4" rx="1.2" fill="none" stroke="#50545c" stroke-width="1.2"/><path d="M8.9 7.2 V11.8 M6.6 9.5 H11.2" stroke="#50545c" stroke-width="1.2"/></svg>
<svg class="a" style="left:944px;top:117px" width="15" height="17" viewBox="0 0 15 17"><path d="M8 4.4 H3.2 A1.4 1.4 0 0 0 1.8 5.8 V14 A1.4 1.4 0 0 0 3.2 15.4 H10.6 A1.4 1.4 0 0 0 12 14 V9.2" fill="none" stroke="#50545c" stroke-width="1.2"/><path d="M11.4 1.2 V7.6 M8.2 4.4 H14.6" stroke="#50545c" stroke-width="1.2"/></svg>
<div class="a" style="left:968px;top:140.5px;width:29.6px;height:29.6px;border-radius:50%;background:#fff;box-shadow:0 1px 3px rgba(30,40,60,.18)"></div>
<svg class="a" style="left:974px;top:147px" width="18" height="17" viewBox="0 0 18 17"><path d="M10.2 2.1 A7.1 5.4 0 1 0 15.4 8.1" fill="none" stroke="#1b1f26" stroke-width="1.2" stroke-linecap="round"/><path d="M5.6 12.3 L7.4 15.3 L9.8 12.8" fill="#fff" stroke="#1b1f26" stroke-width="1.2" stroke-linejoin="round"/><path d="M14.3 1.2 V6.2 M11.8 3.7 H16.8" stroke="#1b1f26" stroke-width="1.2"/></svg>
<svg class="a" style="left:326px;top:534px" width="8" height="9" viewBox="0 0 8 9"><path d="M6 1 L2 4.5 L6 8 Z" fill="#a3a3a3"/></svg>
<svg class="a" style="left:1001px;top:534px" width="8" height="9" viewBox="0 0 8 9"><path d="M2 1 L6 4.5 L2 8 Z" fill="#a3a3a3"/></svg>
<svg class="a" style="left:1013px;top:83px" width="9" height="6" viewBox="0 0 9 6"><path d="M1 5 L4.5 1.3 L8 5 Z" fill="#a3a3a3"/></svg>
<svg class="a" style="left:1013px;top:522px" width="9" height="6" viewBox="0 0 9 6"><path d="M1 1 L4.5 4.7 L8 1 Z" fill="#a3a3a3"/></svg>
<svg class="a" style="left:644px;top:536px" width="64" height="11" viewBox="0 0 64 11"><path d="M0 10.5 C8 10.5 8 1 18 1 H46 C56 1 56 10.5 64 10.5 Z" fill="#fff"/></svg>
<svg class="a" style="left:670px;top:539px" width="8" height="6" viewBox="0 0 8 6"><path d="M1.5 4.5 L4 2 L6.5 4.5" fill="none" stroke="#0e1318" stroke-width="1.2" stroke-linecap="round"/></svg>
<svg class="a" style="left:334px;top:554px" width="16" height="14" viewBox="0 0 16 14"><path d="M1.5 2 H11 M1.5 5 H8 M1.5 8 H5 M1.5 11 H3" stroke="#0e1318" stroke-width="1.3" stroke-linecap="round"/><path d="M6.6 12.6 L7 10 L13.2 3.8 A1.2 1.2 0 0 1 15 5.6 L8.8 11.8 Z" fill="none" stroke="#0e1318" stroke-width="1.3" stroke-linejoin="round"/></svg>
<div class="a" style="left:357px;top:554.8px;font-size:11.1px;color:#0e1318;line-height:13px;-webkit-text-stroke:0.3px #0e1318">Notes</div>
<div class="a" style="left:687.5px;top:555px;font-size:11px;color:#2c3038;line-height:13px">40%</div>
<div class="a" style="left:732.5px;top:560.2px;width:52px;height:1.8px;background:#8f949c"></div>
<div class="a" style="left:784px;top:560.5px;width:98.5px;height:1.2px;background:#d9dce0"></div>
<div class="a" style="left:780.2px;top:556.6px;width:9px;height:9px;border-radius:50%;background:#0e1318"></div>
<svg class="a" style="left:899px;top:551px" width="21" height="20" viewBox="0 0 21 20"><path d="M6.4 2.2 H16.2 A1.4 1.4 0 0 1 17.6 3.6 V15.2" fill="none" stroke="#0e1318" stroke-width="1.2"/><path d="M4.6 3.8 H15.2 A1 1 0 0 1 16.2 4.8 V15.6" fill="none" stroke="#4a4e56" stroke-width="1"/><rect x="2.9" y="5" width="12.6" height="12.6" rx="1.2" fill="#fff" stroke="#0e1318" stroke-width="1.3"/><text x="9.2" y="14.4" font-size="7" text-anchor="middle" fill="#0e1318" font-family="Liberation Sans">1</text></svg>
<svg class="a" style="left:931px;top:553px" width="16" height="16" viewBox="0 0 16 16"><path d="M9.5 2.5 H14 V7 M14 2.5 L9.6 6.9 M6.5 13.5 H2 V9 M2 13.5 L6.4 9.1" fill="none" stroke="#0e1318" stroke-width="1.4"/></svg>
<div class="a" style="left:957.5px;top:552.5px;width:1px;height:17px;background:#e1e3e7"></div>
<svg class="a" style="left:967px;top:552px" width="18" height="18" viewBox="0 0 18 18"><circle cx="9" cy="8.6" r="7" fill="none" stroke="#0e1318" stroke-width="1.4"/><path d="M5.6 8.8 L7.9 11 L12.3 6.6" fill="none" stroke="#0e1318" stroke-width="1.5" stroke-linecap="round" stroke-linejoin="round"/></svg>
<svg class="a" style="left:997px;top:552px" width="18" height="18" viewBox="0 0 18 18"><circle cx="9" cy="8.6" r="7" fill="none" stroke="#0e1318" stroke-width="1.4"/><path d="M6.6 6.6 A2.4 2.4 0 1 1 9.6 9 Q9 9.4 9 10.6" fill="none" stroke="#0e1318" stroke-width="1.5" stroke-linecap="round"/><circle cx="9" cy="12.8" r="0.95" fill="#0e1318"/></svg>
<div class="a" style="left:0;top:575px;width:980px;height:1px;background:#dedfe1"></div>

<div class="a" style="left:1022px;top:271.5px;width:2px;height:14px;background:#2a2d33;border-left:0.5px solid #fff"></div>
<div class="a" style="left:1022px;top:574px;width:2px;height:2px;background:#222"></div>
</body></html>
